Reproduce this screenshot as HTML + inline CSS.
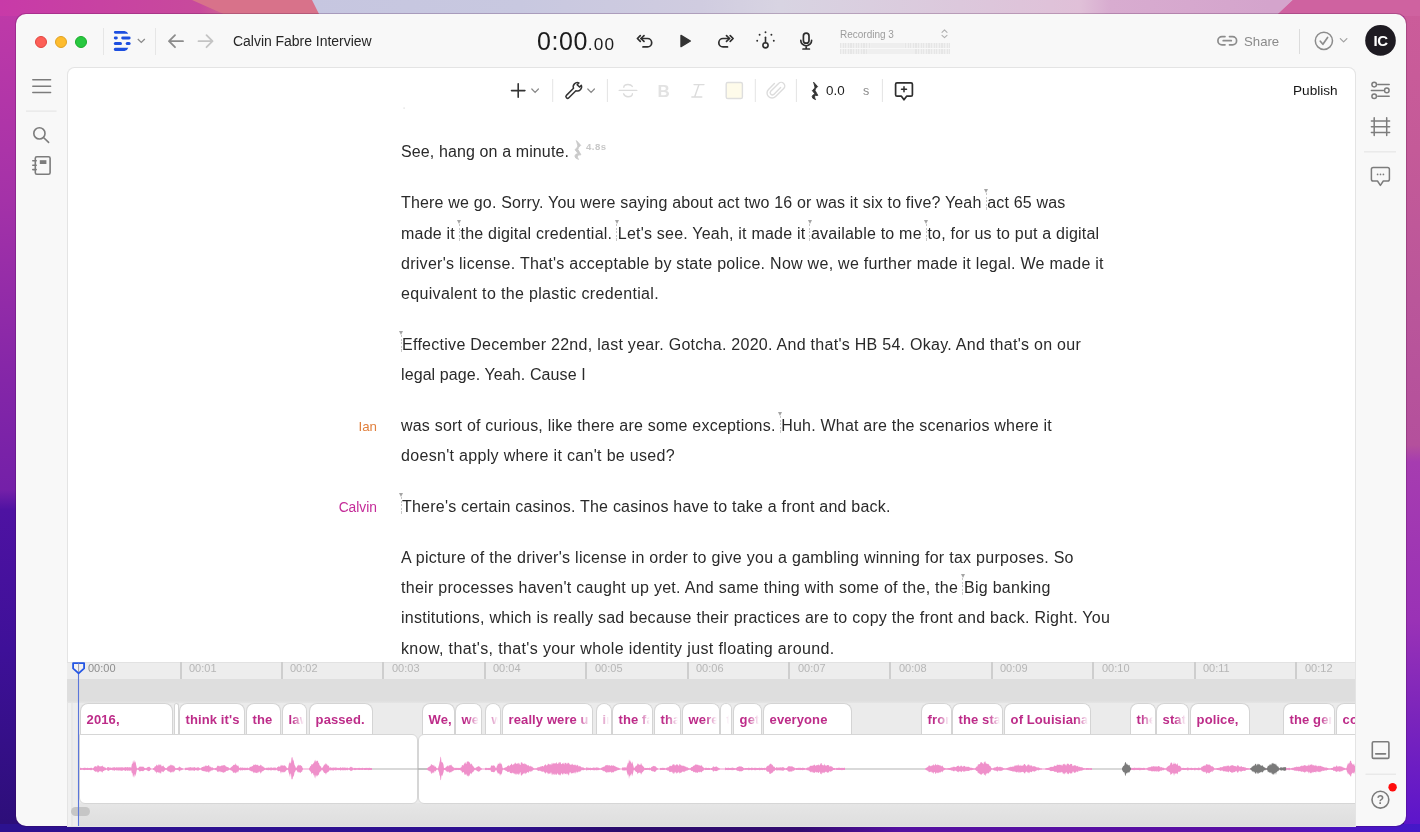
<!DOCTYPE html>
<html><head><meta charset="utf-8"><style>
*{box-sizing:border-box;margin:0;padding:0}
html,body{width:1420px;height:832px;overflow:hidden}
body{position:relative;font-family:"Liberation Sans",sans-serif;background:#3a1290;-webkit-font-smoothing:antialiased}
.tx,.a,.tag{will-change:transform}
.a{position:absolute}
svg{position:absolute;overflow:visible}
#win{position:absolute;left:16px;top:14px;width:1390px;height:812px;border-radius:10px;background:#f8f8f8;box-shadow:0 0 0 1px rgba(60,0,60,.22)}
#panel{position:absolute;left:67.5px;top:67.5px;width:1287px;height:758.5px;background:#fff;border-radius:6.5px 6.5px 0 0;box-shadow:0 0 0 1px #e4e4e4}
.dot{width:12.2px;height:12.2px;border-radius:50%;border:0.5px solid}
.vdiv{width:1px;background:#e6e6e6}
.meter{background:repeating-linear-gradient(90deg,#e6e6e6 0 1.2px,#f0f0f0 1.2px 2.6px)}
.tx{position:absolute;left:401px;font-size:16px;line-height:16px;color:#2a2a2a;white-space:nowrap}
.mk{display:inline-block;width:1px;height:16px;vertical-align:top;position:relative}
.mk::before{content:"";position:absolute;left:-2.2px;top:-6.4px;width:0;height:0;border-left:2.2px solid transparent;border-right:2.2px solid transparent;border-top:4.6px solid #a4a4a4}
.mk::after{content:"";position:absolute;left:-0.5px;top:-1.6px;width:1px;height:17.3px;background:repeating-linear-gradient(#c6c6c6 0 2.2px,rgba(255,255,255,0) 2.2px 3.6px)}
#tl{position:absolute;left:0;top:0;width:1420px;height:832px;overflow:hidden;clip-path:inset(0 65.5px 6.5px 67px)}
.tag{position:absolute;top:703px;height:31.5px;background:#fff;border:1px solid #d4d4d4;border-bottom:none;border-radius:8px 8px 0 0;overflow:hidden;white-space:nowrap}
.tag span{position:absolute;left:5.6px;top:8.4px;font-size:13px;font-weight:bold;color:#bd2c89;letter-spacing:0.1px}
.fade::after{content:"";position:absolute;right:0;top:0;width:14px;height:100%;background:linear-gradient(90deg,rgba(255,255,255,0),#fff 85%)}
.clip{top:734px;height:70px;background:#fff;border:1px solid #d6d6d6}
</style></head><body>

<div class="a" style="left:0;top:0;width:1420px;height:832px;background:linear-gradient(180deg,#c03aa8 0px,#a432a8 200px,#8426a8 380px,#7420a8 490px,#4e12a2 510px,#3e1098 650px,#2c0e78 832px)"></div>
<div class="a" style="left:0;top:0;width:1420px;height:16px;background:linear-gradient(90deg,#c83aa8 0px,#c84a9c 200px,#d06890 230px)"></div>
<div class="a" style="left:0;top:0;width:1420px;height:16px;background:#d8728a;clip-path:polygon(192px 0,320px 0,326px 16px,228px 16px)"></div>
<div class="a" style="left:0;top:0;width:1420px;height:16px;background:linear-gradient(90deg,#c6c6e0 300px,#c8c8e0 520px,#d0cce0 700px,#d8d4e2 780px,#dcc8dc 960px,#e0c0d8 1080px,#d8acd0 1110px,#d4a4cc 1270px);clip-path:polygon(312px 0,1293px 0,1276px 16px,320px 16px)"></div>
<div class="a" style="left:1404px;top:0;width:16px;height:832px;background:linear-gradient(180deg,#cc5c9a 0px,#c45a98 150px,#ba569a 300px,#b4509c 445px,#a63cb0 462px,#9a32b6 620px,#7a24bc 720px,#5a14cc 832px)"></div>
<div class="a" style="left:0;top:0;width:1420px;height:16px;background:#cf62a0;clip-path:polygon(1293px 0,1420px 0,1420px 16px,1276px 16px)"></div>
<div class="a" style="left:0;top:824px;width:1420px;height:8px;background:linear-gradient(90deg,#2c1290 0px,#2e1090 500px,#2a0c6c 620px,#320c70 800px,#5410a0 900px,#5a10a4 1250px,#4c14c0 1340px,#4418c8 1420px)"></div>

<div id="win"></div>

<div class="a dot" style="left:34.5px;top:35.5px;background:#fd5f57;border-color:#e0443e"></div>
<div class="a dot" style="left:54.9px;top:35.5px;background:#febc2e;border-color:#dea123"></div>
<div class="a dot" style="left:75px;top:35.5px;background:#28c840;border-color:#1aab29"></div>
<div class="a vdiv" style="left:103px;top:28px;height:27px"></div>
<div class="a vdiv" style="left:155px;top:28px;height:27px"></div>
<svg style="left:0;top:0" width="1420" height="100">
 <g fill="#1d4fe0">
  <path d="M115.3 30.9 H124.5 Q127.5 31.2 128.2 33.8 H115.3 A1.45 1.45 0 0 1 115.3 30.9Z"/>
  <rect x="113.8" y="36.5" width="4" height="2.9" rx="1.45"/>
  <rect x="121.2" y="36.5" width="9.4" height="2.9" rx="1.45"/>
  <rect x="113.8" y="42" width="8.2" height="3" rx="1.5"/>
  <rect x="125.7" y="42" width="4.9" height="3" rx="1.5"/>
  <path d="M115.3 47.8 H128.3 Q127.5 50.6 124.5 50.9 H115.3 A1.45 1.45 0 0 1 115.3 47.8Z"/>
 </g>
 <path d="M137.8 39 L141.3 42.4 L144.8 39" fill="none" stroke="#8a8a8a" stroke-width="1.3"/>
 <g fill="none" stroke="#8c8c8c" stroke-width="1.8" stroke-linecap="round" stroke-linejoin="round">
  <path d="M183 41.2 H169 M175 35.2 L169 41.2 L175 47.2"/>
 </g>
 <g fill="none" stroke="#c4c4c4" stroke-width="1.8" stroke-linecap="round" stroke-linejoin="round">
  <path d="M198.5 41.2 H212.5 M206.5 35.2 L212.5 41.2 L206.5 47.2"/>
 </g>
 <!-- rewind -->
 <g fill="none" stroke="#2e2e2e" stroke-width="1.7" stroke-linecap="round" stroke-linejoin="round">
  <path d="M641 38.5 H647.5 A4.2 4.2 0 0 1 647.5 46.9 H643"/>
  <path d="M644 35.6 L641 38.5 L644 41.4"/>
  <path d="M640.3 35.6 L637.4 38.5 L640.3 41.4"/>
 </g>
 <path d="M681 35.4 L690.4 41 L681 46.6Z" fill="#333" stroke="#333" stroke-width="1.4" stroke-linejoin="round"/>
 <g fill="none" stroke="#2e2e2e" stroke-width="1.7" stroke-linecap="round" stroke-linejoin="round">
  <path d="M729.5 38.5 H723 A4.2 4.2 0 0 0 723 46.9 H727.5"/>
  <path d="M726.5 35.6 L729.5 38.5 L726.5 41.4"/>
  <path d="M730.2 35.6 L733.1 38.5 L730.2 41.4"/>
 </g>
 <!-- spark icon -->
 <g fill="#2e2e2e">
  <circle cx="765.5" cy="32.2" r="0.95"/>
  <circle cx="759.6" cy="34.8" r="0.95"/>
  <circle cx="771.4" cy="34.8" r="0.95"/>
  <circle cx="757.2" cy="40.8" r="0.95"/>
  <circle cx="773.8" cy="40.8" r="0.95"/>
 </g>
 <g fill="none" stroke="#2e2e2e" stroke-width="1.6" stroke-linecap="round">
  <path d="M765.5 37.2 V42.6"/>
  <circle cx="765.5" cy="45.3" r="2.6"/>
 </g>
 <!-- mic -->
 <g fill="none" stroke="#2e2e2e" stroke-width="1.7" stroke-linecap="round" stroke-linejoin="round">
  <rect x="803.4" y="33.2" width="5.6" height="10" rx="2.8"/>
  <path d="M800.8 40.4 A5.4 5.4 0 0 0 811.6 40.4 M806.2 45.8 V49 M803 49 H809.4"/>
 </g>
 <!-- updown chevron -->
 <g fill="none" stroke="#b0b0b0" stroke-width="1.1" stroke-linecap="round" stroke-linejoin="round">
  <path d="M942 32.3 L944.5 29.9 L947 32.3 M942 35.3 L944.5 37.7 L947 35.3"/>
 </g>
 <!-- link icon -->
 <g fill="none" stroke="#8c8c8c" stroke-width="1.7" stroke-linecap="round">
  <path d="M1225 36.6 H1222 A4.1 4.1 0 0 0 1222 44.8 H1225"/>
  <path d="M1229.5 36.6 H1232.5 A4.1 4.1 0 0 1 1232.5 44.8 H1229.5"/>
  <path d="M1223.2 40.7 H1231.3"/>
 </g>
 <!-- check circle -->
 <g fill="none" stroke="#8c8c8c" stroke-width="1.5" stroke-linecap="round" stroke-linejoin="round">
  <circle cx="1323.9" cy="40.8" r="8.6"/>
  <path d="M1320.3 41.2 L1322.9 44.3 L1327.6 37.5" stroke-width="1.7"/>
  <path d="M1340.3 38.6 L1343.6 41.9 L1346.9 38.6" stroke-width="1.2" stroke="#a0a0a0"/>
 </g>
 <circle cx="1380.5" cy="40.4" r="15.3" fill="#1e1b22"/>
</svg>
<div class="a" style="left:232.5px;top:33px;font-size:14px;color:#262626;white-space:nowrap;letter-spacing:-0.03px">Calvin Fabre Interview</div>
<div class="a" style="left:537px;top:27px;font-size:25px;color:#1c1c1c;white-space:nowrap;letter-spacing:0.55px">0:00<span style="font-size:17.2px;letter-spacing:1.2px">.00</span></div>
<div class="a" style="left:839.5px;top:28.5px;font-size:10px;color:#9c9c9c;white-space:nowrap">Recording 3</div>
<div class="a meter" style="left:839.5px;top:42.5px;width:110px;height:5px"></div>
<div class="a meter" style="left:839.5px;top:48.5px;width:110px;height:5px"></div>
<div class="a" style="left:871px;top:42.5px;width:33px;height:5px;background:#eeeeee"></div>
<div class="a" style="left:869px;top:48.5px;width:46px;height:5px;background:#efefef"></div>
<div class="a" style="left:1244px;top:33.5px;font-size:13.2px;color:#8a8a8a;white-space:nowrap">Share</div>
<div class="a vdiv" style="left:1298.5px;top:28.5px;height:25px;background:#dcdcdc"></div>
<div class="a" style="left:1365px;top:32px;width:31px;text-align:center;font-size:15px;font-weight:bold;color:#fff;letter-spacing:-0.6px">IC</div>


<svg style="left:0;top:0" width="1420" height="832">
 <g fill="none" stroke="#7c7c7c" stroke-width="1.5" stroke-linecap="round">
  <path d="M32.8 79.8 H50.6 M32.8 86.2 H50.6 M32.8 92.5 H50.6"/>
 </g>
 <path d="M26 111.1 H56.5" stroke="#e2e2e2" stroke-width="1"/>
 <g fill="none" stroke="#7c7c7c" stroke-width="1.6" stroke-linecap="round" stroke-linejoin="round">
  <circle cx="39.4" cy="133.4" r="5.6"/>
  <path d="M43.5 137.5 L48.6 142.4"/>
  <rect x="35.3" y="156.7" width="14.8" height="17.6" rx="1.6"/>
  <path d="M32.8 160.8 H36.2 M32.8 165.2 H36.2 M32.8 169.6 H36.2"/>
 </g>
 <rect x="39.8" y="160.2" width="6.6" height="3.8" fill="#7c7c7c"/>
 <!-- right sidebar -->
 <g fill="none" stroke="#7c7c7c" stroke-width="1.5" stroke-linecap="round" stroke-linejoin="round">
  <circle cx="1374.2" cy="84.6" r="2.3"/>
  <path d="M1377.8 84.6 H1389.2"/>
  <path d="M1371.4 90.4 H1383.3"/>
  <circle cx="1386.8" cy="90.4" r="2.3"/>
  <circle cx="1374.2" cy="96.2" r="2.3"/>
  <path d="M1377.8 96.2 H1389.2"/>
  <path d="M1374.2 117.8 V135.6 M1386.7 117.8 V135.6 M1371.4 121 H1389.6 M1371.4 126.7 H1389.6 M1371.4 132.4 H1389.6"/>
  <path d="M1373.6 167.4 H1387.6 Q1389.4 167.4 1389.4 169.2 V179.2 Q1389.4 181 1387.6 181 H1383.3 L1380.4 185.4 L1377.5 181 H1373.2 Q1371.4 181 1371.4 179.2 V169.2 Q1371.4 167.4 1373.2 167.4 Z"/>
 </g>
 <g fill="#7c7c7c"><circle cx="1377.6" cy="174.4" r="0.85"/><circle cx="1380.5" cy="174.4" r="0.85"/><circle cx="1383.4" cy="174.4" r="0.85"/></g>
 <path d="M1364 151.9 H1396" stroke="#e2e2e2" stroke-width="1"/>
 <g fill="none" stroke="#7c7c7c" stroke-width="1.6" stroke-linecap="round" stroke-linejoin="round">
  <rect x="1372.3" y="741.8" width="16.6" height="16.6" rx="1.2"/>
  <path d="M1375.8 753.8 H1385.4" stroke-width="1.8"/>
  <circle cx="1380.4" cy="799.7" r="8.4"/>
 </g>
 <path d="M1365.5 774.2 H1396" stroke="#e2e2e2" stroke-width="1"/>
 <text x="1380.4" y="804" font-family="Liberation Sans" font-weight="bold" font-size="12" fill="#7c7c7c" text-anchor="middle">?</text>
 <circle cx="1392.6" cy="787.3" r="4.2" fill="#ff0c0c"/>
</svg>

<div id="panel"></div>

<svg style="left:0;top:0" width="1420" height="120">
 <g fill="none" stroke="#333" stroke-width="1.6" stroke-linecap="round">
  <path d="M518.2 83.8 V97.3 M511.5 90.6 H524.9"/>
 </g>
 <path d="M531.8 89 L535.1 92.3 L538.4 89" fill="none" stroke="#888" stroke-width="1.2" stroke-linecap="round"/>
 <path d="M587.8 89 L591.1 92.3 L594.4 89" fill="none" stroke="#888" stroke-width="1.2" stroke-linecap="round"/>
 <path d="M552.7 79 V102 M607.4 79 V102 M755.3 79 V102 M796.4 79 V102 M882.4 79 V102" stroke="#e4e4e4" stroke-width="1"/>
 <!-- wrench -->
 <path transform="translate(577.4 86.8) rotate(-45)" d="M-13.8 -1.7 L-3.83 -1.7 A4.2 4.2 0 0 1 3.83 -1.7 L1.3 -1.7 L1.3 1.7 L3.83 1.7 A4.2 4.2 0 0 1 -3.83 1.7 L-13.8 1.7 A1.7 1.7 0 0 1 -13.8 -1.7 Z" fill="none" stroke="#333" stroke-width="1.5" stroke-linejoin="round"/>
 <!-- strike -->
 <g fill="none" stroke="#dcdcdc" stroke-width="1.4" stroke-linecap="round">
  <path d="M619.2 90.4 H636.8"/>
  <path d="M632.3 86.4 Q631 84.5 628 84.5 Q623.8 84.5 623.8 87.3"/>
  <path d="M623.6 93.8 Q624.6 96.7 628 96.7 Q632.4 96.7 632.4 93.8"/>
 </g>
 <text x="657.6" y="97.2" font-family="Liberation Sans" font-weight="bold" font-size="17" fill="#e2e2e2">B</text>
 <g fill="none" stroke="#dcdcdc" stroke-width="1.4" stroke-linecap="round">
  <path d="M694 84.6 H704 M691.8 97 H701.8 M699 84.6 L694.6 97"/>
 </g>
 <rect x="726.2" y="82.5" width="16.2" height="16" rx="1.6" fill="#fefbea" stroke="#dedede" stroke-width="1.4"/>
 <!-- clip -->
 <path d="M780.6 87.6 L773.8 94.4 A2.2 2.2 0 0 1 770.7 91.3 L778.6 83.4 A3.6 3.6 0 0 1 783.7 88.5 L775.6 96.6 A5 5 0 0 1 768.5 89.5 L774.4 83.6" fill="none" stroke="#dcdcdc" stroke-width="1.4" stroke-linecap="round"/>
 <!-- rest squiggle -->
 <path d="M813.6 82.2 L817.6 86.6 Q815.2 88.6 814.9 90.2 L817.8 95.4 Q815.2 95 814.6 96.6 Q814.4 98.2 815.6 99.6 Q812 98.6 812.2 96.4 Q812.6 94.4 815.2 94.2 L812.3 90.6 Q814.8 88.6 815 87.2 Z" fill="#333" stroke="#333" stroke-width="0.9" stroke-linejoin="round"/>
 <!-- add comment -->
 <g fill="none" stroke="#2e2e2e" stroke-width="1.7" stroke-linecap="round" stroke-linejoin="round">
  <path d="M897 82.8 H911 Q912.4 82.8 912.4 84.2 V94.8 Q912.4 96.2 911 96.2 H906.6 L904 99.8 L901.4 96.2 H897 Q895.6 96.2 895.6 94.8 V84.2 Q895.6 82.8 897 82.8 Z"/>
  <path d="M904 86.8 V91.8 M901.5 89.3 H906.5" stroke-width="1.5"/>
 </g>
</svg>
<div class="a" style="left:825.5px;top:83px;font-size:13.4px;color:#1e1e1e;white-space:nowrap">0.0</div>
<div class="a" style="left:863px;top:84px;font-size:12.5px;color:#8a8a8a;white-space:nowrap">s</div>
<div class="a" style="left:1292.5px;top:83px;font-size:13.6px;color:#141414;white-space:nowrap">Publish</div>

<div class="tx" style="top:144.46px;letter-spacing:0.117px">See, hang on a minute.</div>
<div class="tx" style="top:195.46px;letter-spacing:0.178px">There we go. Sorry. You were saying about act two 16 or was it six to five? Yeah <span class="mk"></span>act 65 was</div>
<div class="tx" style="top:226.46px;letter-spacing:0.209px">made it <span class="mk"></span>the digital credential. <span class="mk"></span>Let's see. Yeah, it made it <span class="mk"></span>available to me <span class="mk"></span>to, for us to put a digital</div>
<div class="tx" style="top:256.46px;letter-spacing:0.276px">driver's license. That's acceptable by state police. Now we, we further made it legal. We made it</div>
<div class="tx" style="top:286.46px;letter-spacing:0.339px">equivalent to the plastic credential.</div>
<div class="tx" style="top:337.46px;letter-spacing:0.276px"><span class="mk"></span>Effective December 22nd, last year. Gotcha. 2020. And that's HB 54. Okay. And that's on our</div>
<div class="tx" style="top:367.46px;letter-spacing:0.093px">legal page. Yeah. Cause I</div>
<div class="tx" style="top:418.46px;letter-spacing:0.209px">was sort of curious, like there are some exceptions. <span class="mk"></span>Huh. What are the scenarios where it</div>
<div class="tx" style="top:448.46px;letter-spacing:0.317px">doesn't apply where it can't be used?</div>
<div class="tx" style="top:499.46px;letter-spacing:0.216px"><span class="mk"></span>There's certain casinos. The casinos have to take a front and back.</div>
<div class="tx" style="top:550.46px;letter-spacing:0.284px">A picture of the driver's license in order to give you a gambling winning for tax purposes. So</div>
<div class="tx" style="top:580.46px;letter-spacing:0.285px">their processes haven't caught up yet. And same thing with some of the, the <span class="mk"></span>Big banking</div>
<div class="tx" style="top:610.46px;letter-spacing:0.279px">institutions, which is really sad because their practices are to copy the front and back. Right. You</div>
<div class="tx" style="top:641.46px;letter-spacing:0.369px">know, that's, that's your whole identity just floating around.</div>

<svg style="left:0;top:0" width="700" height="200">
 <path transform="translate(576.4 140.6) scale(1.08) translate(-813.6 -82.2)" d="M813.6 82.2 L817.6 86.6 Q815.2 88.6 814.9 90.2 L817.8 95.4 Q815.2 95 814.6 96.6 Q814.4 98.2 815.6 99.6 Q812 98.6 812.2 96.4 Q812.6 94.4 815.2 94.2 L812.3 90.6 Q814.8 88.6 815 87.2 Z" fill="#cacaca" stroke="#cacaca" stroke-width="0.8" stroke-linejoin="round"/>
 <rect x="403.5" y="107.5" width="1.2" height="1.2" fill="#d8d8d8"/>
</svg>
<div class="a" style="left:585.5px;top:140.5px;font-size:9.6px;font-weight:bold;color:#c8c8c8;white-space:nowrap;letter-spacing:0.5px">4.8s</div>
<div class="a" style="left:357px;top:418.8px;font-size:13.3px;color:#e07f3c;white-space:nowrap;width:20px;text-align:right">Ian</div>

<div class="a" style="left:300px;top:499.6px;font-size:13.8px;color:#c42a98;white-space:nowrap;width:77px;text-align:right">Calvin</div>
<div id="tl"><div class="a" style="left:67px;top:661.5px;width:1288px;height:17.5px;background:#ededed;border-top:1px solid #e2e2e2"></div>
<div class="a" style="left:67px;top:679px;width:1288px;height:24px;background:#dedede"></div>
<div class="a" style="left:67px;top:701px;width:1288px;height:3px;background:linear-gradient(#dfdfdf,#e8e8e8)"></div>
<div class="a" style="left:67px;top:703px;width:1288px;height:101px;background:#ebebeb"></div>
<div class="a" style="left:67px;top:803px;width:1288px;height:23px;background:linear-gradient(#e6e6e6,#dedede)"></div>
<div class="a" style="left:67px;top:703px;width:11.5px;height:123px;background:linear-gradient(90deg,#e4e4e4 0 1px,#f0f0f0 1px 4px,#e8e8e8 4px 6px,#ededed 6px)"></div>
<div class="a" style="left:87.6px;top:662.2px;font-size:11px;color:#8e8e8e;white-space:nowrap">00:00</div>
<div class="a" style="left:179.50px;top:662px;width:1.6px;height:17px;background:#cecece"></div>
<div class="a" style="left:189.0px;top:662.2px;font-size:11px;color:#b6b6b6;white-space:nowrap">00:01</div>
<div class="a" style="left:280.91px;top:662px;width:1.6px;height:17px;background:#cecece"></div>
<div class="a" style="left:290.4px;top:662.2px;font-size:11px;color:#b6b6b6;white-space:nowrap">00:02</div>
<div class="a" style="left:382.32px;top:662px;width:1.6px;height:17px;background:#cecece"></div>
<div class="a" style="left:391.8px;top:662.2px;font-size:11px;color:#b6b6b6;white-space:nowrap">00:03</div>
<div class="a" style="left:483.73px;top:662px;width:1.6px;height:17px;background:#cecece"></div>
<div class="a" style="left:493.2px;top:662.2px;font-size:11px;color:#b6b6b6;white-space:nowrap">00:04</div>
<div class="a" style="left:585.14px;top:662px;width:1.6px;height:17px;background:#cecece"></div>
<div class="a" style="left:594.6px;top:662.2px;font-size:11px;color:#b6b6b6;white-space:nowrap">00:05</div>
<div class="a" style="left:686.55px;top:662px;width:1.6px;height:17px;background:#cecece"></div>
<div class="a" style="left:696.1px;top:662.2px;font-size:11px;color:#b6b6b6;white-space:nowrap">00:06</div>
<div class="a" style="left:787.96px;top:662px;width:1.6px;height:17px;background:#cecece"></div>
<div class="a" style="left:797.5px;top:662.2px;font-size:11px;color:#b6b6b6;white-space:nowrap">00:07</div>
<div class="a" style="left:889.37px;top:662px;width:1.6px;height:17px;background:#cecece"></div>
<div class="a" style="left:898.9px;top:662.2px;font-size:11px;color:#b6b6b6;white-space:nowrap">00:08</div>
<div class="a" style="left:990.78px;top:662px;width:1.6px;height:17px;background:#cecece"></div>
<div class="a" style="left:1000.3px;top:662.2px;font-size:11px;color:#b6b6b6;white-space:nowrap">00:09</div>
<div class="a" style="left:1092.19px;top:662px;width:1.6px;height:17px;background:#cecece"></div>
<div class="a" style="left:1101.7px;top:662.2px;font-size:11px;color:#b6b6b6;white-space:nowrap">00:10</div>
<div class="a" style="left:1193.60px;top:662px;width:1.6px;height:17px;background:#cecece"></div>
<div class="a" style="left:1203.1px;top:662.2px;font-size:11px;color:#b6b6b6;white-space:nowrap">00:11</div>
<div class="a" style="left:1295.01px;top:662px;width:1.6px;height:17px;background:#cecece"></div>
<div class="a" style="left:1304.5px;top:662.2px;font-size:11px;color:#b6b6b6;white-space:nowrap">00:12</div>
<div class="tag" style="left:79.6px;width:93.4px"><span>2016,</span></div>
<div class="tag" style="left:173.7px;width:4.6px"><span></span></div>
<div class="tag" style="left:179.2px;width:66.0px"><span>think it's</span></div>
<div class="tag" style="left:246.0px;width:35.0px"><span>the</span></div>
<div class="tag fade" style="left:281.8px;width:24.7px"><span>law</span></div>
<div class="tag" style="left:309.3px;width:64.1px"><span>passed.</span></div>
<div class="tag" style="left:421.8px;width:32.6px"><span>We,</span></div>
<div class="tag fade" style="left:455.1px;width:27.4px"><span>we</span></div>
<div class="tag fade" style="left:485.4px;width:15.6px"><span>w</span></div>
<div class="tag fade" style="left:501.7px;width:91.0px"><span>really were u</span></div>
<div class="tag fade" style="left:595.6px;width:15.6px"><span>in</span></div>
<div class="tag fade" style="left:611.7px;width:41.3px"><span>the fa</span></div>
<div class="tag fade" style="left:654.0px;width:26.7px"><span>tha</span></div>
<div class="tag fade" style="left:681.7px;width:37.5px"><span>were</span></div>
<div class="tag fade" style="left:720.2px;width:11.8px"><span>to</span></div>
<div class="tag fade" style="left:733.0px;width:28.6px"><span>get</span></div>
<div class="tag" style="left:762.6px;width:88.7px"><span>everyone</span></div>
<div class="tag fade" style="left:920.6px;width:30.8px"><span>from</span></div>
<div class="tag fade" style="left:952.0px;width:51.0px"><span>the sta</span></div>
<div class="tag fade" style="left:1004.0px;width:86.5px"><span>of Louisiana</span></div>
<div class="tag fade" style="left:1129.5px;width:26.1px"><span>the</span></div>
<div class="tag fade" style="left:1156.2px;width:33.0px"><span>stat</span></div>
<div class="tag" style="left:1189.8px;width:60.4px"><span>police,</span></div>
<div class="tag fade" style="left:1283.4px;width:51.9px"><span>the ger</span></div>
<div class="tag fade" style="left:1335.7px;width:44.3px"><span>co</span></div>
<div class="a clip" style="left:78.5px;width:339px;border-radius:0 6px 6px 6px"></div>
<div class="a clip" style="left:418.2px;width:980px;border-radius:6px 0 0 6px"></div>
<svg style="left:0;top:0" width="1420" height="832">
<path d="M372 769 H427 M845 769 H925 M1092 769 H1130 M1280 769 H1290" stroke="#b4b4b4" stroke-width="1.2"/>
<path d="M418 769 H427" stroke="#b4b4b4" stroke-width="1.2"/>
<path d="M80 769 H372 M427 769 H845 M925 769 H1092 M1130 769 H1280 M1290 769 H1356" stroke="#ef98cc" stroke-width="1.2"/>
<path d="M80.0 768.0 L80.5 767.7 L81.0 767.8 L81.5 768.2 L82.0 768.3 L82.5 768.2 L83.0 767.9 L83.5 768.1 L84.0 767.8 L84.5 767.8 L85.0 767.7 L85.5 767.8 L86.0 768.2 L86.5 768.0 L87.0 768.0 L87.5 767.7 L88.0 767.8 L88.5 768.2 L89.0 767.9 L89.5 768.1 L90.0 767.9 L90.5 767.7 L91.0 768.0 L91.5 767.8 L92.0 767.8 L92.0 768.4 L92.5 768.4 L93.0 768.3 L93.5 768.1 L94.0 767.1 L94.5 766.6 L95.0 766.4 L95.5 766.3 L96.0 765.9 L96.5 766.5 L97.0 766.9 L97.5 765.6 L98.0 764.9 L98.5 765.6 L99.0 766.3 L99.5 766.2 L100.0 766.6 L100.5 766.5 L101.0 765.9 L101.5 766.4 L102.0 765.7 L102.5 765.5 L103.0 766.7 L103.5 767.0 L104.0 766.5 L104.5 767.4 L105.0 767.5 L105.5 767.5 L106.0 768.2 L106.5 768.4 L107.0 768.4 L107.0 767.3 L107.5 767.3 L108.0 767.3 L108.5 767.1 L109.0 767.4 L109.5 767.6 L110.0 767.7 L110.5 767.6 L111.0 767.6 L111.5 768.0 L112.0 767.8 L112.5 767.8 L113.0 767.1 L113.5 767.5 L114.0 767.4 L114.5 767.1 L115.0 767.6 L115.5 767.8 L116.0 767.5 L116.5 766.9 L117.0 767.7 L117.5 767.3 L118.0 767.4 L118.5 767.6 L119.0 767.1 L119.5 767.5 L120.0 767.6 L120.5 767.2 L121.0 767.5 L121.5 767.2 L122.0 767.3 L122.5 767.2 L123.0 767.6 L123.5 767.4 L124.0 767.7 L124.5 767.5 L125.0 767.1 L125.5 767.2 L126.0 767.0 L126.5 767.6 L127.0 767.5 L127.5 767.1 L128.0 767.0 L128.5 767.3 L129.0 767.9 L129.5 767.1 L130.0 767.1 L130.5 767.6 L131.0 767.4 L131.0 768.4 L131.5 766.3 L132.0 763.6 L132.5 764.0 L133.0 760.5 L133.5 763.3 L134.0 759.5 L134.5 761.8 L135.0 763.1 L135.5 761.0 L136.0 764.2 L136.5 766.4 L137.0 768.4 L137.0 768.4 L137.5 768.4 L138.0 768.1 L138.5 767.8 L139.0 767.2 L139.5 766.6 L140.0 766.7 L140.5 766.6 L141.0 766.7 L141.5 766.5 L142.0 767.0 L142.5 766.8 L143.0 766.2 L143.5 767.0 L144.0 767.2 L144.5 768.0 L145.0 768.1 L145.5 768.2 L146.0 768.4 L146.0 768.4 L146.5 768.1 L147.0 767.5 L147.5 767.2 L148.0 767.1 L148.5 766.9 L149.0 766.5 L149.5 767.1 L150.0 767.3 L150.5 768.3 L151.0 768.4 L151.0 769.5 L150.5 769.6 L150.0 770.4 L149.5 770.9 L149.0 771.0 L148.5 771.2 L148.0 771.0 L147.5 770.6 L147.0 770.4 L146.5 769.9 L146.0 769.5 L146.0 769.6 L145.5 769.7 L145.0 769.8 L144.5 769.9 L144.0 770.8 L143.5 770.8 L143.0 771.6 L142.5 771.0 L142.0 771.0 L141.5 771.0 L141.0 770.8 L140.5 771.2 L140.0 771.4 L139.5 771.4 L139.0 770.6 L138.5 770.3 L138.0 769.8 L137.5 769.6 L137.0 769.5 L137.0 769.5 L136.5 771.6 L136.0 774.0 L135.5 776.6 L135.0 773.5 L134.5 775.6 L134.0 778.0 L133.5 774.7 L133.0 777.4 L132.5 772.9 L132.0 773.4 L131.5 771.8 L131.0 769.5 L131.0 770.6 L130.5 770.4 L130.0 770.7 L129.5 770.9 L129.0 770.1 L128.5 770.7 L128.0 770.8 L127.5 770.9 L127.0 770.2 L126.5 770.2 L126.0 770.7 L125.5 770.9 L125.0 770.7 L124.5 770.4 L124.0 770.1 L123.5 770.2 L123.0 770.3 L122.5 770.8 L122.0 770.7 L121.5 770.9 L121.0 770.2 L120.5 770.7 L120.0 770.4 L119.5 770.3 L119.0 770.8 L118.5 770.5 L118.0 770.2 L117.5 770.4 L117.0 770.3 L116.5 770.6 L116.0 770.3 L115.5 769.9 L115.0 770.3 L114.5 770.9 L114.0 770.2 L113.5 770.3 L113.0 770.5 L112.5 770.3 L112.0 770.1 L111.5 769.8 L111.0 770.1 L110.5 770.1 L110.0 770.0 L109.5 770.3 L109.0 770.4 L108.5 770.9 L108.0 770.7 L107.5 770.3 L107.0 770.6 L107.0 769.6 L106.5 769.6 L106.0 769.7 L105.5 770.2 L105.0 770.3 L104.5 770.3 L104.0 771.0 L103.5 771.1 L103.0 771.0 L102.5 772.5 L102.0 772.4 L101.5 771.3 L101.0 772.1 L100.5 771.0 L100.0 771.3 L99.5 771.2 L99.0 771.4 L98.5 772.2 L98.0 772.4 L97.5 772.6 L97.0 771.0 L96.5 771.4 L96.0 772.2 L95.5 771.4 L95.0 771.4 L94.5 771.1 L94.0 770.7 L93.5 769.9 L93.0 769.7 L92.5 769.6 L92.0 769.5 L92.0 770.0 L91.5 770.2 L91.0 769.9 L90.5 770.3 L90.0 769.9 L89.5 769.8 L89.0 769.9 L88.5 769.7 L88.0 769.9 L87.5 770.1 L87.0 769.9 L86.5 770.0 L86.0 769.6 L85.5 770.0 L85.0 770.0 L84.5 770.0 L84.0 770.3 L83.5 769.8 L83.0 770.1 L82.5 769.6 L82.0 769.6 L81.5 769.7 L81.0 770.0 L80.5 770.0 L80.0 769.8Z M153.0 768.4 L153.5 768.0 L154.0 767.9 L154.5 767.1 L155.0 766.3 L155.5 766.6 L156.0 765.8 L156.5 764.3 L157.0 765.8 L157.5 765.0 L158.0 765.9 L158.5 764.4 L159.0 764.3 L159.5 765.4 L160.0 763.8 L160.5 765.5 L161.0 764.2 L161.5 766.2 L162.0 766.4 L162.5 765.9 L163.0 765.8 L163.5 765.5 L164.0 767.0 L164.5 767.0 L165.0 768.0 L165.5 768.1 L166.0 768.4 L166.0 768.4 L166.5 768.2 L167.0 767.7 L167.5 766.9 L168.0 766.5 L168.5 766.4 L169.0 765.4 L169.5 765.8 L170.0 765.7 L170.5 765.0 L171.0 764.2 L171.5 765.2 L172.0 765.5 L172.5 765.6 L173.0 764.8 L173.5 766.2 L174.0 765.5 L174.5 766.4 L175.0 767.5 L175.5 768.1 L176.0 768.4 L176.0 768.4 L176.5 768.2 L177.0 768.0 L177.5 768.0 L178.0 767.8 L178.5 767.4 L179.0 767.3 L179.5 766.2 L180.0 767.0 L180.5 767.2 L181.0 767.7 L181.5 767.9 L182.0 767.7 L182.5 768.4 L183.0 768.4 L183.0 769.5 L182.5 769.6 L182.0 770.2 L181.5 770.1 L181.0 770.2 L180.5 770.6 L180.0 770.6 L179.5 771.7 L179.0 770.7 L178.5 770.3 L178.0 770.1 L177.5 769.8 L177.0 769.9 L176.5 769.7 L176.0 769.6 L176.0 769.6 L175.5 769.8 L175.0 770.5 L174.5 771.2 L174.0 771.7 L173.5 771.5 L173.0 772.9 L172.5 771.5 L172.0 771.7 L171.5 772.0 L171.0 773.1 L170.5 772.4 L170.0 771.7 L169.5 771.6 L169.0 772.0 L168.5 771.0 L168.0 771.6 L167.5 770.8 L167.0 770.3 L166.5 769.8 L166.0 769.6 L166.0 769.6 L165.5 769.8 L165.0 769.8 L164.5 770.9 L164.0 771.1 L163.5 771.9 L163.0 772.3 L162.5 771.4 L162.0 771.6 L161.5 771.3 L161.0 774.0 L160.5 772.6 L160.0 773.7 L159.5 772.0 L159.0 773.2 L158.5 772.5 L158.0 771.7 L157.5 772.4 L157.0 771.8 L156.5 773.7 L156.0 771.8 L155.5 771.5 L155.0 771.8 L154.5 770.5 L154.0 770.1 L153.5 770.0 L153.0 769.6Z M185.0 768.0 L185.5 767.7 L186.0 767.8 L186.5 767.8 L187.0 767.7 L187.5 767.8 L188.0 767.6 L188.5 767.5 L189.0 767.5 L189.5 767.3 L190.0 767.5 L190.5 766.9 L191.0 767.2 L191.5 767.8 L192.0 767.3 L192.5 767.5 L193.0 767.8 L193.5 767.4 L194.0 767.1 L194.5 767.3 L195.0 767.3 L195.5 767.8 L196.0 767.9 L196.5 767.8 L197.0 767.4 L197.5 767.3 L198.0 767.4 L198.5 767.2 L199.0 767.6 L200.0 768.4 L200.5 768.4 L201.0 768.2 L201.5 767.4 L202.0 767.0 L202.5 767.0 L203.0 766.9 L203.5 766.6 L204.0 766.4 L204.5 766.7 L205.0 765.5 L205.5 765.6 L206.0 766.5 L206.5 765.5 L207.0 765.8 L207.5 765.9 L208.0 765.9 L208.5 765.1 L209.0 765.1 L209.5 766.9 L210.0 766.0 L210.5 766.9 L211.0 767.3 L211.5 767.4 L212.0 767.6 L212.5 767.2 L213.0 767.8 L213.5 768.3 L214.0 768.4 L214.0 768.4 L214.5 768.4 L215.0 768.0 L215.5 768.0 L216.0 767.7 L216.5 767.7 L217.0 766.4 L217.5 765.8 L218.0 765.6 L218.5 766.3 L219.0 765.4 L219.5 766.5 L220.0 766.2 L220.5 766.3 L221.0 765.7 L221.5 765.7 L222.0 765.3 L222.5 765.8 L223.0 765.3 L223.5 765.5 L224.0 764.8 L224.5 765.2 L225.0 765.4 L225.5 765.7 L226.0 766.8 L226.5 766.4 L227.0 767.0 L227.5 767.3 L228.0 766.8 L228.5 767.5 L229.0 768.0 L229.5 768.4 L230.0 768.4 L230.0 768.4 L230.5 767.7 L231.0 767.2 L231.5 766.9 L232.0 766.3 L232.5 766.2 L233.0 765.6 L233.5 764.7 L234.0 764.9 L234.5 764.6 L235.0 765.3 L235.5 763.1 L236.0 764.8 L236.5 764.7 L237.0 766.0 L237.5 765.8 L238.0 765.2 L238.5 766.0 L239.0 767.6 L239.5 767.8 L240.0 768.4 L240.0 767.8 L240.5 767.4 L241.0 767.2 L241.5 767.9 L242.0 767.6 L242.5 767.5 L243.0 767.8 L243.5 767.8 L244.0 768.0 L244.5 767.8 L245.0 767.5 L245.5 767.9 L246.0 767.7 L246.5 768.1 L247.0 767.7 L247.5 767.7 L248.0 767.5 L248.0 768.4 L248.5 768.3 L249.0 767.7 L249.5 767.7 L250.0 766.6 L250.5 767.0 L251.0 766.7 L251.5 766.8 L252.0 766.0 L252.5 766.2 L253.0 765.7 L253.5 764.8 L254.0 764.5 L254.5 765.2 L255.0 764.6 L255.5 764.3 L256.0 765.3 L256.5 764.9 L257.0 764.4 L257.5 765.2 L258.0 764.5 L258.5 766.1 L259.0 765.7 L259.5 765.8 L260.0 766.0 L260.5 764.4 L261.0 765.1 L261.5 765.3 L262.0 766.9 L262.5 766.1 L263.0 766.3 L263.5 766.9 L264.0 767.4 L264.5 767.7 L265.0 767.7 L265.5 768.3 L266.0 768.4 L266.0 767.5 L266.5 768.1 L267.0 767.8 L267.5 767.9 L268.0 767.3 L268.5 767.7 L269.0 767.5 L269.5 768.1 L270.0 767.6 L270.5 767.6 L271.0 767.8 L271.5 767.3 L272.0 767.8 L272.5 767.8 L273.0 768.1 L273.5 767.6 L274.0 767.4 L274.5 767.8 L275.0 767.3 L275.5 767.7 L276.0 767.7 L276.0 768.4 L276.5 768.2 L277.0 767.5 L277.5 767.1 L278.0 767.0 L278.5 766.0 L279.0 766.7 L279.5 766.6 L280.0 766.8 L280.5 765.9 L281.0 764.4 L281.5 765.5 L282.0 765.9 L282.5 764.8 L283.0 766.2 L283.5 765.6 L284.0 765.3 L284.5 765.5 L285.0 765.5 L285.5 766.3 L286.0 766.6 L286.5 767.6 L287.0 768.1 L287.5 768.2 L288.0 768.4 L288.0 768.4 L288.5 766.0 L289.0 763.3 L289.5 763.2 L290.0 760.9 L290.5 763.6 L291.0 763.0 L291.5 757.9 L292.0 757.1 L292.5 757.4 L293.0 761.2 L293.5 759.3 L294.0 762.4 L294.5 764.8 L295.0 765.7 L295.5 766.8 L296.0 768.4 L296.0 768.4 L296.5 767.6 L297.0 766.9 L297.5 765.3 L298.0 766.1 L298.5 765.1 L299.0 764.5 L299.5 765.7 L300.0 764.9 L300.5 765.2 L301.0 765.5 L301.5 766.0 L302.0 766.2 L302.5 767.8 L303.0 768.4 L303.0 769.5 L302.5 770.0 L302.0 771.9 L301.5 771.6 L301.0 772.2 L300.5 772.9 L300.0 772.4 L299.5 772.2 L299.0 772.5 L298.5 772.6 L298.0 771.3 L297.5 772.4 L297.0 770.7 L296.5 770.2 L296.0 769.5 L296.0 769.5 L295.5 771.1 L295.0 771.7 L294.5 772.6 L294.0 775.2 L293.5 776.6 L293.0 776.7 L292.5 779.2 L292.0 779.3 L291.5 779.3 L291.0 773.8 L290.5 773.5 L290.0 777.3 L289.5 774.8 L289.0 773.4 L288.5 771.9 L288.0 769.5 L288.0 769.6 L287.5 769.7 L287.0 770.0 L286.5 770.1 L286.0 770.9 L285.5 771.3 L285.0 772.0 L284.5 771.7 L284.0 772.7 L283.5 772.2 L283.0 771.5 L282.5 772.7 L282.0 771.8 L281.5 771.7 L281.0 773.8 L280.5 772.3 L280.0 771.0 L279.5 770.8 L279.0 771.3 L278.5 771.3 L278.0 770.8 L277.5 770.6 L277.0 770.5 L276.5 769.8 L276.0 769.5 L276.0 770.2 L275.5 770.1 L275.0 770.8 L274.5 770.0 L274.0 770.2 L273.5 770.3 L273.0 769.9 L272.5 770.0 L272.0 770.2 L271.5 770.6 L271.0 770.0 L270.5 770.5 L270.0 770.2 L269.5 769.7 L269.0 770.2 L268.5 770.3 L268.0 770.3 L267.5 770.0 L267.0 770.2 L266.5 769.8 L266.0 770.3 L266.0 769.6 L265.5 769.5 L265.0 770.0 L264.5 770.1 L264.0 770.2 L263.5 770.8 L263.0 771.3 L262.5 771.2 L262.0 771.2 L261.5 772.2 L261.0 773.1 L260.5 773.7 L260.0 771.6 L259.5 771.5 L259.0 772.4 L258.5 771.5 L258.0 773.6 L257.5 772.3 L257.0 772.7 L256.5 773.2 L256.0 772.6 L255.5 772.8 L255.0 772.7 L254.5 772.1 L254.0 773.4 L253.5 772.4 L253.0 771.9 L252.5 771.1 L252.0 772.1 L251.5 770.9 L251.0 771.2 L250.5 770.5 L250.0 771.3 L249.5 770.1 L249.0 770.2 L248.5 769.7 L248.0 769.5 L248.0 770.1 L247.5 770.0 L247.0 770.2 L246.5 769.7 L246.0 770.3 L245.5 769.9 L245.0 770.3 L244.5 770.2 L244.0 770.0 L243.5 770.1 L243.0 770.2 L242.5 770.5 L242.0 770.3 L241.5 769.9 L241.0 770.4 L240.5 770.6 L240.0 770.2 L240.0 769.5 L239.5 770.1 L239.0 770.3 L238.5 771.3 L238.0 772.8 L237.5 771.8 L237.0 771.5 L236.5 772.5 L236.0 773.0 L235.5 773.6 L235.0 772.1 L234.5 772.8 L234.0 772.8 L233.5 772.7 L233.0 772.5 L232.5 771.3 L232.0 771.1 L231.5 770.6 L231.0 770.4 L230.5 770.3 L230.0 769.5 L230.0 769.6 L229.5 769.5 L229.0 769.9 L228.5 770.3 L228.0 770.8 L227.5 770.7 L227.0 770.7 L226.5 771.0 L226.0 770.7 L225.5 772.1 L225.0 772.2 L224.5 771.9 L224.0 772.8 L223.5 772.6 L223.0 772.7 L222.5 772.3 L222.0 772.0 L221.5 771.7 L221.0 772.4 L220.5 771.7 L220.0 771.1 L219.5 771.2 L219.0 772.4 L218.5 771.3 L218.0 771.8 L217.5 772.0 L217.0 771.1 L216.5 770.3 L216.0 770.3 L215.5 769.9 L215.0 769.8 L214.5 769.5 L214.0 769.5 L214.0 769.6 L213.5 769.6 L213.0 770.1 L212.5 770.4 L212.0 770.3 L211.5 770.5 L211.0 770.8 L210.5 770.7 L210.0 772.1 L209.5 770.9 L209.0 773.1 L208.5 772.2 L208.0 771.5 L207.5 771.7 L207.0 771.7 L206.5 772.3 L206.0 771.1 L205.5 771.6 L205.0 771.9 L204.5 770.9 L204.0 771.0 L203.5 771.3 L203.0 771.0 L202.5 770.7 L202.0 771.1 L201.5 770.3 L201.0 769.6 L200.5 769.5 L200.0 769.5 L199.0 770.3 L198.5 770.7 L198.0 770.2 L197.5 770.7 L197.0 770.5 L196.5 770.2 L196.0 769.9 L195.5 769.9 L195.0 770.6 L194.5 770.7 L194.0 770.9 L193.5 770.6 L193.0 770.1 L192.5 770.5 L192.0 770.6 L191.5 770.2 L191.0 770.7 L190.5 770.6 L190.0 770.3 L189.5 770.7 L189.0 770.5 L188.5 770.4 L188.0 770.1 L187.5 769.9 L187.0 770.1 L186.5 770.0 L186.0 770.1 L185.5 770.2 L185.0 769.9Z M309.0 768.4 L309.5 767.8 L310.0 766.8 L310.5 765.7 L311.0 765.9 L311.5 763.7 L312.0 764.8 L312.5 763.9 L313.0 764.5 L313.5 762.4 L314.0 763.3 L314.5 759.9 L315.0 762.3 L315.5 759.4 L316.0 762.0 L316.5 761.0 L317.0 760.6 L317.5 760.8 L318.0 761.2 L318.5 763.2 L319.0 762.7 L319.5 765.3 L320.0 765.4 L320.5 766.5 L321.0 766.2 L321.5 767.9 L322.0 768.4 L322.0 768.4 L322.5 767.6 L323.0 766.7 L323.5 766.0 L324.0 765.1 L324.5 764.3 L325.0 765.1 L325.5 763.7 L326.0 763.1 L326.5 764.4 L327.0 764.2 L327.5 765.2 L328.0 765.7 L328.5 765.5 L329.0 766.3 L329.5 767.5 L330.0 768.4 L330.0 767.6 L330.5 767.3 L331.0 767.5 L331.5 767.7 L332.0 768.0 L332.5 767.7 L333.0 767.3 L333.5 767.4 L334.0 768.0 L334.5 767.6 L335.0 767.6 L335.5 767.5 L336.0 767.6 L336.5 767.8 L337.0 767.6 L337.5 768.0 L338.0 768.0 L338.5 767.7 L339.0 768.0 L339.5 767.9 L340.0 767.5 L340.5 767.3 L341.0 767.6 L341.5 768.0 L342.0 767.8 L342.5 767.5 L343.0 767.3 L343.5 767.7 L344.0 767.7 L344.5 767.5 L345.0 767.5 L345.5 767.8 L346.0 767.7 L346.5 767.8 L347.0 768.0 L347.5 767.5 L348.0 767.7 L348.0 768.4 L348.5 768.2 L349.0 768.1 L349.5 767.8 L350.0 767.6 L350.5 766.9 L351.0 766.6 L351.5 767.2 L352.0 767.3 L352.5 767.8 L353.0 767.6 L353.5 768.4 L354.0 768.4 L354.0 768.1 L354.5 767.9 L355.0 767.7 L355.5 768.1 L356.0 768.2 L356.5 768.1 L357.0 768.3 L357.5 768.3 L358.0 767.8 L358.5 768.1 L359.0 767.9 L359.5 767.8 L360.0 768.1 L360.5 768.3 L361.0 767.9 L361.5 768.3 L362.0 767.8 L362.5 767.8 L363.0 768.1 L363.5 768.2 L364.0 768.2 L364.5 768.0 L365.0 767.9 L365.5 767.9 L366.0 767.8 L366.5 768.1 L367.0 767.8 L367.5 767.9 L368.0 768.2 L368.5 767.9 L369.0 767.8 L369.5 767.7 L370.0 768.1 L370.5 768.0 L371.0 768.0 L371.5 768.1 L372.0 767.9 L372.0 770.1 L371.5 769.9 L371.0 770.0 L370.5 770.0 L370.0 769.9 L369.5 770.1 L369.0 770.0 L368.5 770.2 L368.0 769.7 L367.5 769.8 L367.0 770.0 L366.5 769.8 L366.0 770.1 L365.5 769.9 L365.0 769.9 L364.5 770.0 L364.0 769.8 L363.5 769.6 L363.0 769.7 L362.5 770.1 L362.0 770.0 L361.5 769.7 L361.0 770.0 L360.5 769.7 L360.0 769.7 L359.5 770.0 L359.0 770.0 L358.5 769.8 L358.0 770.0 L357.5 769.6 L357.0 769.7 L356.5 769.8 L356.0 769.7 L355.5 769.9 L355.0 770.2 L354.5 769.9 L354.0 769.8 L354.0 769.6 L353.5 769.5 L353.0 770.3 L352.5 770.2 L352.0 770.4 L351.5 770.8 L351.0 771.2 L350.5 770.7 L350.0 770.3 L349.5 770.0 L349.0 769.8 L348.5 769.6 L348.0 769.5 L348.0 770.4 L347.5 770.3 L347.0 769.8 L346.5 769.9 L346.0 770.3 L345.5 770.3 L345.0 770.2 L344.5 770.2 L344.0 770.1 L343.5 770.3 L343.0 770.6 L342.5 770.2 L342.0 770.1 L341.5 770.0 L341.0 770.4 L340.5 770.5 L340.0 770.3 L339.5 770.0 L339.0 770.0 L338.5 770.3 L338.0 770.0 L337.5 769.8 L337.0 770.2 L336.5 770.0 L336.0 770.4 L335.5 770.2 L335.0 770.2 L334.5 770.1 L334.0 769.9 L333.5 770.7 L333.0 770.4 L332.5 770.4 L332.0 770.1 L331.5 770.3 L331.0 770.6 L330.5 770.3 L330.0 770.2 L330.0 769.5 L329.5 770.5 L329.0 771.1 L328.5 771.7 L328.0 771.9 L327.5 772.3 L327.0 772.7 L326.5 772.7 L326.0 774.8 L325.5 773.4 L325.0 772.7 L324.5 773.1 L324.0 772.7 L323.5 771.8 L323.0 771.0 L322.5 770.3 L322.0 769.5 L322.0 769.5 L321.5 770.0 L321.0 771.8 L320.5 771.1 L320.0 772.1 L319.5 772.2 L319.0 774.1 L318.5 774.9 L318.0 775.3 L317.5 775.5 L317.0 776.8 L316.5 775.9 L316.0 774.4 L315.5 779.0 L315.0 774.3 L314.5 778.5 L314.0 774.2 L313.5 775.8 L313.0 772.7 L312.5 773.6 L312.0 772.9 L311.5 774.5 L311.0 771.9 L310.5 771.6 L310.0 771.2 L309.5 770.2 L309.0 769.6Z M427.0 768.4 L427.5 767.9 L428.0 767.5 L428.5 767.2 L429.0 766.8 L429.5 766.8 L430.0 766.0 L430.5 766.1 L431.0 764.2 L431.5 763.9 L432.0 765.5 L432.5 765.1 L433.0 764.7 L433.5 766.3 L434.0 764.6 L434.5 766.4 L435.0 766.7 L435.5 766.2 L436.0 767.3 L436.5 768.1 L437.0 768.4 L438.0 768.4 L438.5 766.4 L439.0 765.1 L439.5 762.4 L440.0 760.6 L440.5 756.6 L441.0 757.2 L441.5 762.5 L442.0 761.7 L442.5 762.6 L443.0 763.2 L443.5 764.8 L444.0 768.4 L444.0 768.4 L444.5 768.0 L445.0 768.0 L445.5 767.4 L446.0 767.3 L446.5 766.6 L447.0 766.3 L447.5 766.0 L448.0 765.0 L448.5 766.2 L449.0 766.4 L449.5 765.1 L450.0 764.9 L450.5 765.4 L451.0 764.5 L451.5 765.0 L452.0 766.6 L452.5 766.2 L453.0 767.0 L453.5 767.4 L454.0 767.5 L454.5 768.0 L455.0 768.4 L455.0 768.1 L455.5 767.8 L456.0 768.0 L456.5 767.7 L457.0 768.1 L457.5 767.8 L458.0 768.2 L458.5 767.8 L459.0 768.1 L459.5 768.0 L460.0 767.8 L460.0 768.4 L460.5 767.5 L461.0 767.4 L461.5 766.9 L462.0 765.0 L462.5 765.1 L463.0 765.8 L463.5 765.3 L464.0 764.0 L464.5 763.4 L465.0 762.2 L465.5 762.5 L466.0 764.3 L466.5 763.4 L467.0 760.9 L467.5 761.6 L468.0 762.1 L468.5 761.3 L469.0 761.7 L469.5 762.3 L470.0 763.3 L470.5 764.1 L471.0 764.8 L471.5 763.2 L472.0 764.2 L472.5 765.4 L473.0 765.9 L473.5 766.4 L474.0 767.4 L474.5 767.7 L475.0 768.4 L475.0 768.4 L475.5 768.3 L476.0 767.2 L476.5 767.6 L477.0 766.9 L477.5 766.9 L478.0 766.0 L478.5 766.3 L479.0 766.6 L479.5 766.6 L480.0 767.2 L480.5 767.4 L481.0 768.0 L481.5 768.4 L482.0 768.4 L482.0 769.6 L481.5 769.5 L481.0 769.9 L480.5 770.2 L480.0 770.8 L479.5 771.4 L479.0 771.3 L478.5 771.7 L478.0 771.7 L477.5 771.0 L477.0 771.0 L476.5 770.3 L476.0 770.6 L475.5 769.7 L475.0 769.5 L475.0 769.6 L474.5 770.2 L474.0 770.5 L473.5 771.7 L473.0 771.7 L472.5 772.2 L472.0 772.9 L471.5 774.6 L471.0 772.7 L470.5 773.6 L470.0 774.1 L469.5 775.4 L469.0 776.0 L468.5 776.8 L468.0 774.6 L467.5 776.2 L467.0 776.1 L466.5 774.5 L466.0 773.4 L465.5 774.8 L465.0 775.1 L464.5 774.5 L464.0 772.8 L463.5 772.0 L463.0 772.0 L462.5 772.4 L462.0 773.0 L461.5 770.8 L461.0 770.7 L460.5 770.4 L460.0 769.5 L460.0 769.9 L459.5 769.9 L459.0 769.7 L458.5 770.2 L458.0 769.7 L457.5 770.0 L457.0 769.8 L456.5 770.2 L456.0 769.8 L455.5 770.2 L455.0 769.9 L455.0 769.5 L454.5 769.9 L454.0 770.4 L453.5 770.4 L453.0 771.0 L452.5 771.6 L452.0 771.0 L451.5 772.1 L451.0 772.5 L450.5 772.1 L450.0 772.5 L449.5 772.9 L449.0 771.6 L448.5 771.6 L448.0 772.6 L447.5 771.5 L447.0 771.8 L446.5 771.4 L446.0 770.6 L445.5 770.6 L445.0 769.9 L444.5 770.0 L444.0 769.5 L444.0 769.5 L443.5 772.3 L443.0 773.7 L442.5 775.2 L442.0 776.2 L441.5 774.7 L441.0 780.0 L440.5 780.2 L440.0 776.1 L439.5 775.3 L439.0 772.3 L438.5 771.3 L438.0 769.5 L437.0 769.5 L436.5 769.8 L436.0 770.7 L435.5 771.8 L435.0 770.8 L434.5 771.1 L434.0 773.5 L433.5 771.8 L433.0 773.4 L432.5 772.8 L432.0 772.2 L431.5 773.9 L431.0 773.5 L430.5 771.2 L430.0 771.4 L429.5 771.3 L429.0 770.6 L428.5 770.8 L428.0 770.4 L427.5 769.9 L427.0 769.6Z M485.0 768.0 L485.5 768.0 L486.0 767.6 L486.5 768.1 L487.0 768.0 L487.5 768.2 L488.0 767.8 L488.5 767.9 L489.0 768.0 L489.5 767.9 L490.0 767.7 L490.0 768.4 L490.5 767.4 L491.0 766.0 L491.5 765.2 L492.0 765.8 L492.5 765.4 L493.0 765.8 L493.5 765.2 L494.0 765.4 L494.5 765.8 L495.0 766.4 L495.5 767.4 L496.0 768.4 L496.0 768.4 L496.5 767.5 L497.0 765.5 L497.5 765.6 L498.0 763.0 L498.5 764.3 L499.0 763.8 L499.5 763.7 L500.0 761.7 L500.5 764.1 L501.0 763.2 L501.5 764.0 L502.0 765.1 L502.5 767.4 L503.0 768.4 L503.0 768.4 L503.5 768.4 L504.0 768.2 L504.5 767.7 L505.0 767.5 L505.5 767.4 L506.0 767.1 L506.5 767.3 L507.0 766.4 L507.5 765.7 L508.0 766.1 L508.5 765.0 L509.0 765.7 L509.5 766.6 L510.0 764.9 L510.5 765.2 L511.0 764.6 L511.5 763.5 L512.0 764.1 L512.5 765.2 L513.0 765.0 L513.5 764.1 L514.0 764.6 L514.5 763.8 L515.0 762.6 L515.5 762.8 L516.0 764.1 L516.5 764.0 L517.0 763.0 L517.5 763.7 L518.0 763.6 L518.5 762.6 L519.0 764.8 L519.5 762.8 L520.0 765.1 L520.5 764.9 L521.0 761.9 L521.5 762.7 L522.0 762.1 L522.5 763.4 L523.0 763.8 L523.5 763.9 L524.0 763.6 L524.5 763.2 L525.0 764.8 L525.5 763.5 L526.0 764.2 L526.5 764.4 L527.0 765.1 L527.5 765.5 L528.0 765.4 L528.5 764.8 L529.0 766.3 L529.5 766.6 L530.0 765.8 L530.5 765.8 L531.0 767.1 L531.5 766.4 L532.0 766.2 L532.5 767.2 L533.0 767.4 L533.5 768.1 L534.0 768.4 L534.5 768.4 L535.0 768.4 L535.0 768.4 L535.5 768.4 L536.0 768.3 L536.5 768.4 L537.0 767.8 L537.5 767.5 L538.0 767.3 L538.5 767.2 L539.0 767.3 L539.5 766.8 L540.0 767.6 L540.5 766.3 L541.0 766.6 L541.5 766.6 L542.0 765.9 L542.5 766.1 L543.0 766.1 L543.5 766.7 L544.0 765.9 L544.5 765.1 L545.0 765.3 L545.5 763.9 L546.0 764.8 L546.5 766.0 L547.0 765.0 L547.5 765.3 L548.0 763.3 L548.5 763.9 L549.0 764.3 L549.5 764.5 L550.0 764.2 L550.5 764.0 L551.0 765.5 L551.5 764.0 L552.0 762.5 L552.5 764.8 L553.0 762.6 L553.5 763.7 L554.0 763.3 L554.5 763.2 L555.0 763.7 L555.5 762.8 L556.0 763.9 L556.5 761.7 L557.0 763.2 L557.5 764.0 L558.0 764.1 L558.5 761.9 L559.0 764.1 L559.5 761.7 L560.0 762.6 L560.5 762.1 L561.0 763.8 L561.5 764.2 L562.0 763.9 L562.5 763.2 L563.0 763.1 L563.5 764.2 L564.0 762.0 L564.5 765.0 L565.0 762.6 L565.5 762.9 L566.0 763.0 L566.5 764.6 L567.0 762.3 L567.5 763.7 L568.0 763.6 L568.5 762.7 L569.0 762.7 L569.5 764.3 L570.0 764.6 L570.5 765.1 L571.0 764.3 L571.5 764.9 L572.0 763.5 L572.5 764.1 L573.0 765.3 L573.5 765.0 L574.0 764.4 L574.5 764.8 L575.0 765.6 L575.5 764.3 L576.0 765.7 L576.5 765.7 L577.0 764.5 L577.5 765.0 L578.0 765.5 L578.5 766.1 L579.0 766.9 L579.5 765.8 L580.0 766.0 L580.5 766.3 L581.0 767.2 L581.5 767.3 L582.0 767.3 L582.5 767.6 L583.0 767.3 L583.5 767.4 L584.0 768.1 L584.5 768.2 L585.0 768.3 L585.5 768.4 L586.0 768.4 L586.0 767.3 L586.5 767.6 L587.0 767.4 L587.5 767.6 L588.0 768.0 L588.5 767.6 L589.0 767.9 L589.5 767.8 L590.0 767.9 L590.5 767.4 L591.0 768.0 L591.5 768.0 L592.0 768.0 L592.5 768.0 L593.0 767.5 L593.5 767.6 L594.0 767.8 L594.5 767.8 L595.0 767.5 L595.5 768.0 L596.0 767.4 L596.5 767.4 L597.0 767.2 L597.5 767.4 L598.0 768.0 L598.5 767.6 L599.0 768.0 L600.0 768.4 L600.5 768.4 L601.0 768.3 L601.5 767.6 L602.0 767.8 L602.5 767.0 L603.0 767.2 L603.5 766.7 L604.0 766.5 L604.5 766.8 L605.0 765.7 L605.5 765.4 L606.0 765.0 L606.5 765.0 L607.0 765.7 L607.5 765.1 L608.0 764.7 L608.5 765.8 L609.0 765.2 L609.5 765.1 L610.0 766.1 L610.5 765.4 L611.0 766.3 L611.5 764.7 L612.0 765.6 L612.5 765.4 L613.0 766.2 L613.5 764.8 L614.0 766.0 L614.5 766.3 L615.0 765.5 L615.5 766.7 L616.0 766.7 L616.5 767.2 L617.0 766.7 L617.5 767.8 L618.0 767.6 L618.5 767.7 L619.0 767.9 L619.5 768.4 L620.0 768.4 L620.0 769.5 L619.5 769.5 L619.0 770.1 L618.5 770.0 L618.0 770.3 L617.5 770.1 L617.0 770.8 L616.5 770.4 L616.0 771.3 L615.5 770.8 L615.0 771.8 L614.5 771.1 L614.0 771.7 L613.5 772.8 L613.0 771.8 L612.5 772.5 L612.0 772.3 L611.5 773.3 L611.0 771.6 L610.5 772.2 L610.0 771.6 L609.5 772.6 L609.0 772.1 L608.5 772.2 L608.0 772.6 L607.5 772.5 L607.0 771.5 L606.5 773.1 L606.0 772.4 L605.5 771.8 L605.0 771.9 L604.5 770.7 L604.0 771.3 L603.5 771.2 L603.0 770.5 L602.5 770.8 L602.0 770.0 L601.5 770.1 L601.0 769.7 L600.5 769.5 L600.0 769.5 L599.0 769.9 L598.5 770.2 L598.0 769.8 L597.5 770.3 L597.0 770.3 L596.5 770.3 L596.0 770.2 L595.5 769.8 L595.0 770.5 L594.5 770.2 L594.0 770.0 L593.5 770.2 L593.0 770.2 L592.5 770.0 L592.0 770.0 L591.5 770.1 L591.0 769.9 L590.5 770.4 L590.0 769.9 L589.5 770.1 L589.0 770.1 L588.5 770.3 L588.0 769.8 L587.5 770.1 L587.0 770.4 L586.5 770.2 L586.0 770.6 L586.0 769.6 L585.5 769.5 L585.0 769.7 L584.5 769.8 L584.0 769.9 L583.5 770.3 L583.0 770.3 L582.5 770.1 L582.0 770.3 L581.5 770.3 L581.0 770.5 L580.5 771.6 L580.0 771.5 L579.5 772.3 L579.0 770.7 L578.5 772.0 L578.0 772.3 L577.5 772.1 L577.0 773.6 L576.5 771.8 L576.0 771.5 L575.5 773.9 L575.0 771.7 L574.5 772.7 L574.0 773.8 L573.5 772.6 L573.0 772.9 L572.5 773.3 L572.0 773.2 L571.5 773.2 L571.0 773.7 L570.5 772.0 L570.0 772.6 L569.5 772.6 L569.0 775.5 L568.5 775.2 L568.0 773.7 L567.5 773.4 L567.0 775.0 L566.5 773.6 L566.0 773.6 L565.5 774.2 L565.0 774.1 L564.5 772.7 L564.0 775.0 L563.5 772.7 L563.0 774.4 L562.5 774.4 L562.0 773.9 L561.5 772.9 L561.0 773.8 L560.5 775.3 L560.0 775.5 L559.5 775.0 L559.0 773.9 L558.5 775.3 L558.0 773.8 L557.5 773.1 L557.0 774.6 L556.5 775.0 L556.0 774.0 L555.5 775.1 L555.0 773.1 L554.5 775.0 L554.0 774.6 L553.5 773.4 L553.0 775.4 L552.5 773.2 L552.0 775.6 L551.5 773.6 L551.0 771.9 L550.5 773.2 L550.0 773.9 L549.5 773.3 L549.0 773.8 L548.5 773.3 L548.0 774.7 L547.5 772.5 L547.0 773.0 L546.5 772.1 L546.0 772.5 L545.5 774.0 L545.0 772.7 L544.5 772.5 L544.0 771.9 L543.5 771.3 L543.0 771.8 L542.5 771.7 L542.0 771.4 L541.5 771.4 L541.0 771.3 L540.5 771.1 L540.0 770.4 L539.5 770.7 L539.0 770.8 L538.5 770.9 L538.0 770.7 L537.5 770.2 L537.0 770.2 L536.5 769.6 L536.0 769.6 L535.5 769.5 L535.0 769.5 L535.0 769.6 L534.5 769.6 L534.0 769.6 L533.5 769.7 L533.0 770.3 L532.5 770.4 L532.0 771.5 L531.5 771.6 L531.0 770.6 L530.5 771.8 L530.0 771.9 L529.5 770.9 L529.0 771.5 L528.5 773.3 L528.0 772.2 L527.5 772.1 L527.0 772.2 L526.5 773.5 L526.0 773.1 L525.5 774.6 L525.0 772.2 L524.5 773.5 L524.0 773.8 L523.5 773.2 L523.0 773.8 L522.5 774.2 L522.0 775.4 L521.5 775.2 L521.0 775.7 L520.5 772.3 L520.0 772.3 L519.5 774.7 L519.0 773.1 L518.5 775.3 L518.0 774.0 L517.5 773.5 L517.0 774.9 L516.5 774.2 L516.0 773.1 L515.5 774.4 L515.0 774.4 L514.5 773.8 L514.0 772.9 L513.5 773.8 L513.0 772.6 L512.5 772.8 L512.0 773.6 L511.5 773.2 L511.0 773.0 L510.5 772.9 L510.0 773.3 L509.5 771.3 L509.0 772.1 L508.5 772.1 L508.0 771.6 L507.5 772.3 L507.0 771.4 L506.5 770.7 L506.0 770.9 L505.5 770.5 L505.0 770.2 L504.5 770.0 L504.0 769.6 L503.5 769.5 L503.0 769.6 L503.0 769.6 L502.5 770.5 L502.0 772.9 L501.5 774.1 L501.0 774.7 L500.5 773.9 L500.0 776.2 L499.5 773.2 L499.0 774.1 L498.5 772.7 L498.0 773.9 L497.5 772.5 L497.0 771.7 L496.5 770.5 L496.0 769.6 L496.0 769.6 L495.5 770.7 L495.0 771.3 L494.5 772.0 L494.0 772.2 L493.5 772.2 L493.0 772.0 L492.5 771.9 L492.0 771.7 L491.5 772.1 L491.0 771.6 L490.5 770.3 L490.0 769.5 L490.0 770.3 L489.5 770.0 L489.0 770.0 L488.5 770.0 L488.0 770.2 L487.5 769.8 L487.0 769.8 L486.5 769.9 L486.0 770.3 L485.5 770.0 L485.0 769.9Z M622.0 767.7 L622.5 767.5 L623.0 767.3 L623.5 767.7 L624.0 767.2 L624.5 767.3 L625.0 767.7 L625.5 767.2 L626.0 767.5 L626.0 768.4 L626.5 767.1 L627.0 765.7 L627.5 763.9 L628.0 762.2 L628.5 763.7 L629.0 759.0 L629.5 761.7 L630.0 760.1 L630.5 761.4 L631.0 762.6 L631.5 764.1 L632.0 761.2 L632.5 762.5 L633.0 764.4 L633.5 766.3 L634.0 768.4 L634.0 768.4 L634.5 767.8 L635.0 766.9 L635.5 766.5 L636.0 765.5 L636.5 765.8 L637.0 765.6 L637.5 762.9 L638.0 764.4 L638.5 763.6 L639.0 765.0 L639.5 764.8 L640.0 764.4 L640.5 764.9 L641.0 762.8 L641.5 763.9 L642.0 765.4 L642.5 765.5 L643.0 766.0 L643.5 766.7 L644.0 767.3 L644.5 767.9 L645.0 768.4 L645.0 767.8 L645.5 767.9 L646.0 768.0 L646.5 768.0 L647.0 768.1 L647.5 767.7 L648.0 768.3 L648.5 768.0 L649.0 768.1 L649.5 767.6 L650.0 768.1 L650.0 768.4 L650.5 768.2 L651.0 767.5 L651.5 767.0 L652.0 766.7 L652.5 766.5 L653.0 766.3 L653.5 766.0 L654.0 765.8 L654.5 766.2 L655.0 766.2 L655.5 766.3 L656.0 767.0 L656.5 767.6 L657.0 767.7 L657.5 768.3 L658.0 768.4 L658.0 769.5 L657.5 769.6 L657.0 770.1 L656.5 770.3 L656.0 770.8 L655.5 771.7 L655.0 771.4 L654.5 771.9 L654.0 771.9 L653.5 771.2 L653.0 771.1 L652.5 771.4 L652.0 771.1 L651.5 770.9 L651.0 770.4 L650.5 769.8 L650.0 769.6 L650.0 769.8 L649.5 770.4 L649.0 769.7 L648.5 769.9 L648.0 769.6 L647.5 770.1 L647.0 769.7 L646.5 770.0 L646.0 770.1 L645.5 770.0 L645.0 770.0 L645.0 769.5 L644.5 770.1 L644.0 770.5 L643.5 770.9 L643.0 771.7 L642.5 772.2 L642.0 772.4 L641.5 773.8 L641.0 774.8 L640.5 772.8 L640.0 772.8 L639.5 772.7 L639.0 772.2 L638.5 773.3 L638.0 773.1 L637.5 774.5 L637.0 772.2 L636.5 772.0 L636.0 771.9 L635.5 771.2 L635.0 770.7 L634.5 770.3 L634.0 769.5 L634.0 769.5 L633.5 771.0 L633.0 773.6 L632.5 775.1 L632.0 776.6 L631.5 772.9 L631.0 774.7 L630.5 774.8 L630.0 776.7 L629.5 775.4 L629.0 779.3 L628.5 773.8 L628.0 775.8 L627.5 774.2 L627.0 772.5 L626.5 770.6 L626.0 769.5 L626.0 770.5 L625.5 770.6 L625.0 770.1 L624.5 770.7 L624.0 770.4 L623.5 770.2 L623.0 770.7 L622.5 770.2 L622.0 770.0Z M660.0 767.8 L660.5 767.9 L661.0 768.0 L661.5 768.1 L662.0 767.8 L662.5 767.7 L663.0 767.9 L663.5 767.7 L664.0 767.9 L664.5 768.1 L665.0 767.8 L665.0 768.4 L665.5 768.4 L666.0 768.1 L666.5 767.7 L667.0 767.7 L667.5 767.6 L668.0 767.1 L668.5 767.4 L669.0 766.7 L669.5 766.2 L670.0 765.4 L670.5 766.2 L671.0 765.4 L671.5 766.0 L672.0 766.3 L672.5 764.3 L673.0 765.0 L673.5 764.1 L674.0 764.4 L674.5 764.5 L675.0 766.0 L675.5 764.9 L676.0 765.3 L676.5 764.1 L677.0 764.8 L677.5 764.3 L678.0 765.2 L678.5 765.5 L679.0 765.9 L679.5 763.8 L680.0 764.2 L680.5 764.8 L681.0 765.6 L681.5 765.4 L682.0 765.6 L682.5 766.2 L683.0 764.9 L683.5 766.3 L684.0 765.7 L684.5 765.9 L685.0 767.1 L685.5 766.4 L686.0 766.4 L686.5 767.2 L687.0 767.4 L687.5 767.2 L688.0 767.6 L688.5 768.2 L689.0 768.2 L689.5 768.4 L690.0 768.4 L690.0 768.4 L690.5 768.3 L691.0 767.4 L691.5 767.1 L692.0 767.0 L692.5 767.1 L693.0 765.9 L693.5 766.0 L694.0 765.3 L694.5 765.6 L695.0 765.3 L695.5 764.1 L696.0 765.1 L696.5 764.6 L697.0 764.5 L697.5 765.1 L698.0 764.6 L698.5 765.2 L699.0 765.5 L699.5 765.0 L700.0 765.9 L700.5 766.0 L701.0 764.6 L701.5 765.7 L702.0 765.6 L702.5 766.8 L703.0 767.2 L703.5 767.6 L704.0 767.7 L704.5 768.2 L705.0 768.4 L705.0 767.6 L705.5 767.9 L706.0 767.8 L706.5 767.7 L707.0 768.0 L707.5 768.1 L708.0 768.0 L708.5 767.8 L709.0 767.9 L709.5 768.1 L710.0 768.0 L710.0 768.4 L710.5 768.4 L711.0 768.2 L711.5 767.9 L712.0 767.9 L712.5 767.6 L713.0 766.6 L713.5 766.3 L714.0 767.1 L714.5 767.2 L715.0 766.5 L715.5 767.0 L716.0 766.6 L716.5 766.4 L717.0 766.8 L717.5 767.5 L718.0 767.2 L718.5 768.1 L719.0 768.3 L719.5 768.4 L720.0 768.4 L720.0 769.5 L719.5 769.5 L719.0 769.5 L718.5 769.7 L718.0 770.7 L717.5 770.5 L717.0 770.8 L716.5 771.2 L716.0 770.9 L715.5 770.9 L715.0 771.2 L714.5 770.7 L714.0 770.6 L713.5 771.7 L713.0 771.4 L712.5 770.3 L712.0 770.0 L711.5 769.9 L711.0 769.7 L710.5 769.5 L710.0 769.6 L710.0 769.9 L709.5 769.9 L709.0 769.9 L708.5 770.0 L708.0 770.0 L707.5 769.9 L707.0 769.9 L706.5 770.0 L706.0 770.0 L705.5 769.9 L705.0 770.3 L705.0 769.5 L704.5 769.6 L704.0 770.1 L703.5 770.5 L703.0 770.9 L702.5 771.1 L702.0 771.7 L701.5 772.3 L701.0 772.5 L700.5 771.5 L700.0 772.0 L699.5 772.4 L699.0 771.6 L698.5 772.1 L698.0 772.6 L697.5 772.9 L697.0 772.4 L696.5 772.8 L696.0 772.1 L695.5 773.1 L695.0 772.0 L694.5 771.7 L694.0 772.6 L693.5 772.0 L693.0 771.5 L692.5 770.7 L692.0 771.1 L691.5 771.0 L691.0 770.4 L690.5 769.7 L690.0 769.6 L690.0 769.5 L689.5 769.6 L689.0 769.8 L688.5 769.8 L688.0 770.2 L687.5 770.6 L687.0 770.6 L686.5 770.5 L686.0 771.2 L685.5 771.2 L685.0 770.4 L684.5 772.1 L684.0 772.3 L683.5 771.2 L683.0 772.2 L682.5 771.2 L682.0 772.0 L681.5 772.7 L681.0 772.2 L680.5 772.9 L680.0 772.9 L679.5 773.8 L679.0 771.6 L678.5 772.3 L678.0 772.8 L677.5 772.6 L677.0 773.4 L676.5 773.6 L676.0 772.0 L675.5 772.7 L675.0 771.5 L674.5 772.9 L674.0 773.8 L673.5 773.7 L673.0 772.1 L672.5 773.6 L672.0 771.3 L671.5 771.9 L671.0 772.1 L670.5 771.7 L670.0 772.3 L669.5 771.9 L669.0 771.1 L668.5 770.4 L668.0 770.7 L667.5 770.5 L667.0 770.2 L666.5 770.1 L666.0 769.8 L665.5 769.6 L665.0 769.6 L665.0 770.1 L664.5 769.7 L664.0 770.1 L663.5 770.1 L663.0 770.1 L662.5 770.1 L662.0 769.9 L661.5 769.9 L661.0 769.8 L660.5 770.0 L660.0 770.2Z M725.0 767.7 L725.5 767.6 L726.0 767.8 L726.5 768.0 L727.0 768.1 L727.5 767.7 L728.0 768.0 L728.5 767.6 L729.0 768.1 L729.5 768.1 L730.0 768.1 L730.5 767.9 L731.0 767.8 L731.5 767.7 L732.0 768.0 L732.5 767.6 L733.0 767.6 L733.5 767.9 L734.0 767.9 L734.5 768.2 L735.0 767.9 L735.0 768.4 L735.5 768.3 L736.0 767.9 L736.5 767.9 L737.0 767.0 L737.5 767.0 L738.0 767.2 L738.5 766.5 L739.0 766.6 L739.5 766.1 L740.0 766.9 L740.5 766.5 L741.0 765.8 L741.5 766.7 L742.0 767.1 L742.5 767.1 L743.0 767.3 L743.5 768.0 L744.0 768.0 L744.5 768.3 L745.0 768.4 L745.0 767.9 L745.5 768.1 L746.0 768.1 L746.5 768.1 L747.0 768.1 L747.5 768.0 L748.0 768.1 L748.5 767.5 L749.0 768.1 L749.5 767.7 L750.0 768.3 L750.5 768.0 L751.0 767.9 L751.5 767.6 L752.0 767.8 L752.5 767.8 L753.0 768.1 L753.5 768.3 L754.0 767.8 L754.5 768.1 L755.0 767.6 L755.5 768.0 L756.0 767.7 L756.5 768.1 L757.0 767.9 L757.5 768.0 L758.0 768.0 L758.5 768.0 L759.0 767.8 L759.5 767.7 L760.0 767.7 L760.5 768.1 L761.0 768.1 L761.5 767.8 L762.0 767.7 L762.5 767.9 L763.0 768.1 L763.5 768.0 L764.0 767.9 L764.5 767.8 L765.0 767.7 L765.0 768.4 L765.5 768.1 L766.0 767.7 L766.5 766.9 L767.0 765.9 L767.5 766.2 L768.0 765.3 L768.5 765.8 L769.0 765.5 L769.5 764.3 L770.0 764.2 L770.5 763.5 L771.0 763.7 L771.5 764.1 L772.0 765.4 L772.5 764.5 L773.0 765.8 L773.5 766.5 L774.0 767.1 L774.5 766.6 L775.0 767.7 L775.5 768.1 L776.0 768.4 L776.0 767.2 L776.5 767.6 L777.0 766.9 L777.5 767.7 L778.0 767.7 L778.5 767.5 L779.0 767.4 L779.5 767.6 L780.0 767.6 L780.5 767.2 L781.0 767.4 L781.5 767.5 L782.0 767.5 L782.5 767.2 L783.0 766.8 L783.5 767.6 L784.0 767.4 L785.0 768.4 L785.5 768.4 L786.0 768.0 L786.5 767.9 L787.0 767.8 L787.5 767.3 L788.0 766.5 L788.5 766.2 L789.0 766.3 L789.5 766.1 L790.0 766.8 L790.5 766.4 L791.0 765.8 L791.5 766.8 L792.0 766.2 L792.5 766.6 L793.0 767.0 L793.5 767.1 L794.0 767.7 L794.5 767.5 L795.0 768.1 L795.5 768.3 L796.0 768.4 L796.0 768.1 L796.5 768.0 L797.0 768.0 L797.5 768.0 L798.0 767.8 L798.5 767.9 L799.0 767.6 L799.5 767.9 L800.0 767.8 L800.5 767.7 L801.0 768.1 L801.5 768.0 L802.0 768.0 L802.5 767.7 L803.0 767.6 L803.5 768.1 L804.0 768.0 L804.5 767.9 L805.0 768.2 L805.0 768.4 L805.5 768.4 L806.0 768.4 L806.5 768.1 L807.0 767.7 L807.5 767.8 L808.0 767.1 L808.5 767.4 L809.0 767.4 L809.5 766.8 L810.0 765.8 L810.5 766.1 L811.0 765.4 L811.5 765.7 L812.0 766.2 L812.5 765.7 L813.0 765.0 L813.5 765.8 L814.0 764.6 L814.5 764.7 L815.0 764.9 L815.5 766.1 L816.0 765.8 L816.5 765.0 L817.0 765.2 L817.5 764.8 L818.0 765.6 L818.5 764.6 L819.0 764.6 L819.5 765.8 L820.0 765.1 L820.5 763.7 L821.0 763.0 L821.5 763.1 L822.0 765.5 L822.5 764.6 L823.0 765.5 L823.5 765.0 L824.0 765.7 L824.5 763.6 L825.0 765.2 L825.5 765.7 L826.0 764.9 L826.5 765.9 L827.0 765.3 L827.5 765.1 L828.0 764.9 L828.5 765.3 L829.0 765.3 L829.5 766.4 L830.0 766.9 L830.5 765.9 L831.0 765.8 L831.5 766.8 L832.0 766.6 L832.5 766.9 L833.0 767.8 L833.5 768.0 L834.0 767.9 L834.5 767.9 L835.0 768.2 L835.5 768.4 L836.0 768.4 L836.0 767.8 L836.5 768.0 L837.0 768.2 L837.5 767.9 L838.0 767.8 L838.5 767.8 L839.0 767.8 L839.5 767.8 L840.0 767.8 L840.5 767.9 L841.0 767.9 L841.5 767.8 L842.0 767.9 L842.5 767.8 L843.0 768.1 L843.5 767.9 L844.0 767.8 L844.5 767.8 L845.0 767.8 L845.0 769.9 L844.5 770.0 L844.0 770.0 L843.5 770.0 L843.0 769.7 L842.5 770.2 L842.0 769.9 L841.5 770.3 L841.0 769.9 L840.5 770.1 L840.0 770.0 L839.5 770.0 L839.0 770.1 L838.5 770.1 L838.0 770.1 L837.5 769.9 L837.0 769.7 L836.5 769.8 L836.0 770.2 L836.0 769.5 L835.5 769.6 L835.0 769.6 L834.5 769.9 L834.0 770.0 L833.5 769.9 L833.0 770.1 L832.5 770.8 L832.0 771.1 L831.5 771.2 L831.0 771.6 L830.5 771.9 L830.0 770.9 L829.5 771.0 L829.0 772.8 L828.5 771.8 L828.0 773.2 L827.5 772.2 L827.0 772.7 L826.5 771.5 L826.0 772.3 L825.5 771.8 L825.0 771.8 L824.5 773.5 L824.0 772.0 L823.5 773.0 L823.0 772.5 L822.5 773.6 L822.0 771.8 L821.5 774.5 L821.0 774.1 L820.5 773.9 L820.0 772.3 L819.5 771.5 L819.0 772.7 L818.5 772.9 L818.0 772.5 L817.5 772.3 L817.0 772.1 L816.5 772.4 L816.0 772.4 L815.5 771.4 L815.0 772.6 L814.5 772.7 L814.0 773.0 L813.5 772.2 L813.0 772.8 L812.5 772.3 L812.0 771.3 L811.5 772.1 L811.0 772.5 L810.5 771.9 L810.0 771.5 L809.5 771.3 L809.0 770.5 L808.5 770.4 L808.0 770.6 L807.5 769.9 L807.0 770.4 L806.5 769.7 L806.0 769.6 L805.5 769.5 L805.0 769.6 L805.0 769.7 L804.5 769.8 L804.0 770.0 L803.5 769.8 L803.0 770.3 L802.5 770.2 L802.0 769.8 L801.5 769.9 L801.0 769.9 L800.5 770.0 L800.0 770.2 L799.5 769.8 L799.0 770.0 L798.5 770.1 L798.0 770.1 L797.5 769.8 L797.0 770.0 L796.5 769.9 L796.0 769.9 L796.0 769.5 L795.5 769.6 L795.0 769.8 L794.5 770.3 L794.0 770.4 L793.5 770.9 L793.0 770.6 L792.5 770.8 L792.0 771.9 L791.5 770.9 L791.0 772.1 L790.5 771.5 L790.0 771.1 L789.5 771.9 L789.0 771.5 L788.5 771.6 L788.0 771.2 L787.5 770.4 L787.0 770.1 L786.5 769.9 L786.0 769.8 L785.5 769.5 L785.0 769.6 L784.0 770.3 L783.5 770.4 L783.0 771.1 L782.5 770.4 L782.0 770.4 L781.5 770.5 L781.0 770.2 L780.5 770.4 L780.0 770.2 L779.5 770.3 L779.0 770.5 L778.5 770.2 L778.0 770.0 L777.5 770.3 L777.0 770.9 L776.5 770.1 L776.0 770.5 L776.0 769.5 L775.5 769.8 L775.0 770.2 L774.5 771.2 L774.0 770.5 L773.5 771.6 L773.0 771.7 L772.5 773.0 L772.0 772.4 L771.5 773.5 L771.0 773.1 L770.5 774.1 L770.0 774.0 L769.5 773.8 L769.0 772.1 L768.5 771.5 L768.0 772.2 L767.5 771.5 L767.0 771.5 L766.5 771.1 L766.0 770.1 L765.5 769.8 L765.0 769.6 L765.0 770.1 L764.5 770.3 L764.0 769.8 L763.5 769.8 L763.0 769.7 L762.5 770.2 L762.0 770.0 L761.5 769.9 L761.0 769.7 L760.5 769.9 L760.0 770.3 L759.5 770.3 L759.0 770.1 L758.5 769.8 L758.0 770.0 L757.5 769.9 L757.0 769.9 L756.5 769.8 L756.0 770.3 L755.5 769.9 L755.0 770.4 L754.5 769.9 L754.0 770.0 L753.5 769.7 L753.0 769.7 L752.5 770.0 L752.0 770.3 L751.5 770.3 L751.0 769.9 L750.5 769.8 L750.0 769.7 L749.5 770.2 L749.0 769.8 L748.5 770.4 L748.0 769.7 L747.5 769.8 L747.0 769.8 L746.5 769.7 L746.0 769.8 L745.5 769.7 L745.0 769.9 L745.0 769.5 L744.5 769.7 L744.0 769.9 L743.5 770.0 L743.0 770.7 L742.5 770.9 L742.0 770.8 L741.5 771.3 L741.0 771.7 L740.5 771.2 L740.0 770.7 L739.5 771.8 L739.0 770.9 L738.5 771.0 L738.0 770.5 L737.5 770.7 L737.0 770.9 L736.5 770.0 L736.0 770.1 L735.5 769.6 L735.0 769.5 L735.0 770.0 L734.5 769.8 L734.0 769.9 L733.5 770.1 L733.0 770.3 L732.5 770.3 L732.0 769.8 L731.5 770.3 L731.0 770.0 L730.5 769.9 L730.0 769.9 L729.5 769.9 L729.0 769.7 L728.5 770.3 L728.0 769.8 L727.5 770.2 L727.0 769.7 L726.5 769.9 L726.0 770.0 L725.5 770.3 L725.0 770.0Z M925.0 768.4 L925.5 768.4 L926.0 767.9 L926.5 767.4 L927.0 767.8 L927.5 766.8 L928.0 767.1 L928.5 765.9 L929.0 765.3 L929.5 765.7 L930.0 765.4 L930.5 766.3 L931.0 766.3 L931.5 766.0 L932.0 765.0 L932.5 765.7 L933.0 764.9 L933.5 763.9 L934.0 765.7 L934.5 765.2 L935.0 765.0 L935.5 763.4 L936.0 764.7 L936.5 765.1 L937.0 765.6 L937.5 764.5 L938.0 764.4 L938.5 765.3 L939.0 764.8 L939.5 765.7 L940.0 765.1 L940.5 765.6 L941.0 766.6 L941.5 766.3 L942.0 765.6 L942.5 765.8 L943.0 766.8 L943.5 767.4 L944.0 767.8 L944.5 768.0 L945.0 768.3 L945.5 768.3 L946.0 768.4 L946.0 768.4 L946.5 768.4 L947.0 768.4 L947.5 768.2 L948.0 768.2 L948.5 768.1 L949.0 768.3 L949.5 767.9 L950.0 767.9 L950.5 767.7 L951.0 767.6 L951.5 767.6 L952.0 767.2 L952.5 767.5 L953.0 766.6 L953.5 767.2 L954.0 766.2 L954.5 766.9 L955.0 766.9 L955.5 767.3 L956.0 766.9 L956.5 766.8 L957.0 766.1 L957.5 766.1 L958.0 765.8 L958.5 765.6 L959.0 766.5 L959.5 766.7 L960.0 766.5 L960.5 766.2 L961.0 765.2 L961.5 765.8 L962.0 766.5 L962.5 766.6 L963.0 767.0 L963.5 766.0 L964.0 765.7 L964.5 766.0 L965.0 766.1 L965.5 766.8 L966.0 767.4 L966.5 766.6 L967.0 766.8 L967.5 767.1 L968.0 766.6 L968.5 766.7 L969.0 767.1 L969.5 767.2 L970.0 767.5 L970.5 767.8 L971.0 767.8 L971.5 767.7 L972.0 767.8 L972.5 768.2 L973.0 768.0 L973.5 768.4 L974.0 768.4 L974.5 768.4 L975.0 768.4 L975.0 768.4 L975.5 767.8 L976.0 767.6 L976.5 766.4 L977.0 766.6 L977.5 766.2 L978.0 764.1 L978.5 764.6 L979.0 764.6 L979.5 764.0 L980.0 764.0 L980.5 762.4 L981.0 762.0 L981.5 762.3 L982.0 762.8 L982.5 763.0 L983.0 764.0 L983.5 764.2 L984.0 761.4 L984.5 762.7 L985.0 760.9 L985.5 762.0 L986.0 764.1 L986.5 763.1 L987.0 764.3 L987.5 764.0 L988.0 763.4 L988.5 764.6 L989.0 764.3 L989.5 765.9 L990.0 765.8 L990.5 766.2 L991.0 767.4 L991.5 768.0 L992.0 768.4 L992.0 768.4 L992.5 768.4 L993.0 768.4 L993.5 767.9 L994.0 767.4 L994.5 767.5 L995.0 767.4 L995.5 767.4 L996.0 767.0 L996.5 767.0 L997.0 766.4 L997.5 766.2 L998.0 767.0 L998.5 767.2 L999.0 767.3 L999.5 766.6 L1000.0 767.3 L1000.5 766.5 L1001.0 767.4 L1001.5 767.2 L1002.0 766.9 L1002.5 767.4 L1003.0 767.9 L1003.5 768.2 L1004.0 768.3 L1004.5 768.4 L1005.0 768.4 L1005.0 768.4 L1005.5 768.4 L1006.0 768.4 L1006.5 768.1 L1007.0 768.2 L1007.5 767.8 L1008.0 767.7 L1008.5 767.5 L1009.0 767.3 L1009.5 767.0 L1010.0 767.6 L1010.5 766.8 L1011.0 766.6 L1011.5 766.9 L1012.0 766.9 L1012.5 766.4 L1013.0 766.6 L1013.5 766.4 L1014.0 766.7 L1014.5 765.7 L1015.0 765.3 L1015.5 765.8 L1016.0 765.5 L1016.5 765.5 L1017.0 765.3 L1017.5 765.8 L1018.0 764.6 L1018.5 764.5 L1019.0 766.3 L1019.5 765.2 L1020.0 765.7 L1020.5 765.7 L1021.0 764.6 L1021.5 765.9 L1022.0 766.0 L1022.5 765.6 L1023.0 765.4 L1023.5 765.2 L1024.0 764.1 L1024.5 764.1 L1025.0 764.2 L1025.5 765.3 L1026.0 765.5 L1026.5 766.2 L1027.0 766.3 L1027.5 764.8 L1028.0 764.8 L1028.5 764.5 L1029.0 764.6 L1029.5 764.9 L1030.0 766.4 L1030.5 765.5 L1031.0 765.0 L1031.5 765.8 L1032.0 765.6 L1032.5 766.7 L1033.0 766.6 L1033.5 766.2 L1034.0 766.0 L1034.5 766.3 L1035.0 766.7 L1035.5 766.4 L1036.0 767.0 L1036.5 767.3 L1037.0 767.6 L1037.5 767.5 L1038.0 767.3 L1038.5 767.4 L1039.0 767.6 L1039.5 768.1 L1040.0 768.3 L1040.5 768.4 L1041.0 768.4 L1041.5 768.4 L1042.0 768.4 L1042.0 769.6 L1041.5 769.5 L1041.0 769.5 L1040.5 769.6 L1040.0 769.7 L1039.5 769.8 L1039.0 770.3 L1038.5 770.6 L1038.0 770.3 L1037.5 770.1 L1037.0 770.3 L1036.5 770.6 L1036.0 770.8 L1035.5 771.0 L1035.0 771.4 L1034.5 771.8 L1034.0 771.3 L1033.5 771.3 L1033.0 771.4 L1032.5 770.8 L1032.0 772.1 L1031.5 772.3 L1031.0 772.1 L1030.5 772.1 L1030.0 771.2 L1029.5 772.7 L1029.0 773.6 L1028.5 772.5 L1028.0 772.3 L1027.5 772.7 L1027.0 771.4 L1026.5 771.6 L1026.0 772.3 L1025.5 771.8 L1025.0 774.0 L1024.5 772.9 L1024.0 773.1 L1023.5 772.0 L1023.0 772.1 L1022.5 771.8 L1022.0 772.0 L1021.5 772.0 L1021.0 772.5 L1020.5 772.4 L1020.0 772.1 L1019.5 772.9 L1019.0 771.1 L1018.5 772.7 L1018.0 772.5 L1017.5 771.6 L1017.0 772.5 L1016.5 772.2 L1016.0 772.2 L1015.5 771.5 L1015.0 771.9 L1014.5 771.6 L1014.0 771.0 L1013.5 771.7 L1013.0 771.4 L1012.5 771.4 L1012.0 771.0 L1011.5 771.0 L1011.0 771.0 L1010.5 770.9 L1010.0 770.2 L1009.5 770.8 L1009.0 770.3 L1008.5 770.3 L1008.0 770.2 L1007.5 770.1 L1007.0 769.6 L1006.5 769.7 L1006.0 769.6 L1005.5 769.5 L1005.0 769.5 L1005.0 769.6 L1004.5 769.5 L1004.0 769.6 L1003.5 769.8 L1003.0 770.0 L1002.5 770.3 L1002.0 771.1 L1001.5 770.7 L1001.0 770.5 L1000.5 771.2 L1000.0 770.6 L999.5 771.2 L999.0 770.3 L998.5 770.8 L998.0 770.6 L997.5 771.8 L997.0 771.4 L996.5 770.5 L996.0 770.9 L995.5 770.6 L995.0 770.4 L994.5 770.5 L994.0 770.4 L993.5 769.9 L993.0 769.6 L992.5 769.6 L992.0 769.5 L992.0 769.5 L991.5 769.7 L991.0 770.5 L990.5 771.7 L990.0 771.6 L989.5 771.9 L989.0 773.1 L988.5 773.2 L988.0 773.7 L987.5 773.3 L987.0 772.6 L986.5 774.5 L986.0 773.3 L985.5 776.0 L985.0 775.3 L984.5 774.2 L984.0 775.3 L983.5 772.8 L983.0 773.6 L982.5 773.6 L982.0 774.3 L981.5 774.5 L981.0 775.0 L980.5 774.2 L980.0 773.9 L979.5 773.5 L979.0 773.6 L978.5 772.4 L978.0 773.4 L977.5 771.4 L977.0 771.0 L976.5 771.0 L976.0 770.4 L975.5 769.9 L975.0 769.6 L975.0 769.6 L974.5 769.6 L974.0 769.5 L973.5 769.5 L973.0 769.9 L972.5 769.7 L972.0 770.1 L971.5 770.3 L971.0 770.3 L970.5 770.1 L970.0 770.4 L969.5 770.5 L969.0 770.8 L968.5 771.0 L968.0 771.1 L967.5 770.7 L967.0 771.3 L966.5 771.1 L966.0 770.6 L965.5 771.3 L965.0 771.6 L964.5 771.5 L964.0 771.5 L963.5 772.0 L963.0 770.5 L962.5 771.0 L962.0 771.3 L961.5 772.3 L961.0 771.9 L960.5 771.2 L960.0 771.2 L959.5 771.4 L959.0 771.1 L958.5 772.3 L958.0 772.3 L957.5 771.6 L957.0 771.8 L956.5 770.7 L956.0 770.9 L955.5 770.6 L955.0 770.6 L954.5 770.7 L954.0 771.7 L953.5 770.9 L953.0 771.0 L952.5 770.4 L952.0 770.4 L951.5 770.4 L951.0 770.4 L950.5 770.1 L950.0 770.0 L949.5 770.1 L949.0 769.8 L948.5 769.7 L948.0 769.7 L947.5 769.6 L947.0 769.6 L946.5 769.5 L946.0 769.6 L946.0 769.6 L945.5 769.5 L945.0 769.6 L944.5 769.9 L944.0 770.2 L943.5 770.7 L943.0 770.6 L942.5 772.4 L942.0 771.8 L941.5 771.6 L941.0 771.4 L940.5 772.4 L940.0 772.4 L939.5 772.1 L939.0 773.2 L938.5 772.2 L938.0 773.6 L937.5 772.8 L937.0 772.4 L936.5 772.6 L936.0 773.5 L935.5 774.3 L935.0 772.2 L934.5 772.3 L934.0 771.7 L933.5 773.8 L933.0 773.2 L932.5 772.0 L932.0 773.0 L931.5 771.8 L931.0 771.6 L930.5 771.8 L930.0 772.2 L929.5 771.8 L929.0 772.4 L928.5 771.6 L928.0 770.4 L927.5 771.2 L927.0 770.0 L926.5 770.4 L926.0 769.8 L925.5 769.5 L925.0 769.5Z M1045.0 768.4 L1045.5 768.4 L1046.0 768.4 L1046.5 768.0 L1047.0 768.0 L1047.5 768.1 L1048.0 768.0 L1048.5 767.7 L1049.0 767.7 L1049.5 767.5 L1050.0 767.2 L1050.5 766.8 L1051.0 767.3 L1051.5 766.8 L1052.0 766.8 L1052.5 766.9 L1053.0 766.7 L1053.5 766.8 L1054.0 765.9 L1054.5 765.3 L1055.0 765.9 L1055.5 766.0 L1056.0 765.4 L1056.5 766.0 L1057.0 764.3 L1057.5 765.0 L1058.0 764.6 L1058.5 764.9 L1059.0 764.9 L1059.5 764.4 L1060.0 765.1 L1060.5 765.3 L1061.0 764.3 L1061.5 765.2 L1062.0 765.7 L1062.5 765.6 L1063.0 763.8 L1063.5 764.6 L1064.0 763.7 L1064.5 763.8 L1065.0 765.3 L1065.5 764.1 L1066.0 766.0 L1066.5 765.1 L1067.0 763.4 L1067.5 763.8 L1068.0 763.7 L1068.5 763.8 L1069.0 764.4 L1069.5 765.2 L1070.0 764.4 L1070.5 764.0 L1071.0 763.7 L1071.5 763.9 L1072.0 764.1 L1072.5 766.0 L1073.0 766.2 L1073.5 765.6 L1074.0 765.4 L1074.5 765.0 L1075.0 765.7 L1075.5 765.2 L1076.0 765.4 L1076.5 766.5 L1077.0 765.9 L1077.5 766.3 L1078.0 765.6 L1078.5 767.0 L1079.0 767.2 L1079.5 766.4 L1080.0 766.9 L1080.5 767.2 L1081.0 767.2 L1081.5 767.0 L1082.0 767.7 L1082.5 767.3 L1083.0 767.7 L1083.5 768.2 L1084.0 768.3 L1084.5 768.3 L1085.0 768.3 L1085.5 768.4 L1086.0 768.4 L1086.0 768.2 L1086.5 768.0 L1087.0 768.0 L1087.5 768.0 L1088.0 768.1 L1088.5 768.2 L1089.0 768.1 L1089.5 768.3 L1090.0 768.4 L1090.5 768.0 L1091.0 768.2 L1091.5 767.9 L1092.0 768.3 L1092.0 769.7 L1091.5 770.1 L1091.0 769.8 L1090.5 769.9 L1090.0 769.6 L1089.5 769.6 L1089.0 769.9 L1088.5 769.8 L1088.0 769.7 L1087.5 769.8 L1087.0 769.8 L1086.5 769.9 L1086.0 769.7 L1086.0 769.6 L1085.5 769.6 L1085.0 769.6 L1084.5 769.6 L1084.0 769.7 L1083.5 769.8 L1083.0 770.3 L1082.5 770.5 L1082.0 770.1 L1081.5 770.7 L1081.0 770.9 L1080.5 770.5 L1080.0 770.8 L1079.5 771.2 L1079.0 770.4 L1078.5 770.8 L1078.0 772.4 L1077.5 771.5 L1077.0 772.1 L1076.5 771.0 L1076.0 772.6 L1075.5 772.6 L1075.0 772.3 L1074.5 772.9 L1074.0 772.7 L1073.5 771.8 L1073.0 771.2 L1072.5 772.0 L1072.0 773.8 L1071.5 773.0 L1071.0 773.8 L1070.5 773.2 L1070.0 773.6 L1069.5 772.3 L1069.0 773.6 L1068.5 774.1 L1068.0 774.5 L1067.5 773.1 L1067.0 774.3 L1066.5 772.1 L1066.0 771.9 L1065.5 773.8 L1065.0 772.5 L1064.5 773.9 L1064.0 774.4 L1063.5 772.9 L1063.0 774.1 L1062.5 772.5 L1062.0 771.7 L1061.5 772.0 L1061.0 772.8 L1060.5 772.6 L1060.0 772.0 L1059.5 773.0 L1059.0 772.1 L1058.5 772.7 L1058.0 772.7 L1057.5 772.9 L1057.0 772.6 L1056.5 771.8 L1056.0 771.7 L1055.5 771.9 L1055.0 771.5 L1054.5 771.9 L1054.0 771.6 L1053.5 770.9 L1053.0 770.9 L1052.5 771.1 L1052.0 771.1 L1051.5 771.2 L1051.0 770.7 L1050.5 771.2 L1050.0 770.8 L1049.5 770.2 L1049.0 770.1 L1048.5 770.1 L1048.0 769.9 L1047.5 769.8 L1047.0 769.9 L1046.5 769.8 L1046.0 769.5 L1045.5 769.5 L1045.0 769.6Z M1130.0 767.9 L1130.5 767.9 L1131.0 767.8 L1131.5 767.9 L1132.0 767.8 L1132.5 768.0 L1133.0 768.2 L1133.5 767.7 L1134.0 767.9 L1134.5 767.6 L1135.0 767.8 L1135.5 768.1 L1136.0 767.7 L1136.5 768.1 L1137.0 767.8 L1137.5 767.9 L1138.0 767.8 L1138.5 767.8 L1139.0 768.0 L1139.5 767.7 L1140.0 767.7 L1140.5 767.9 L1141.0 767.7 L1141.5 768.0 L1142.0 767.9 L1142.5 767.9 L1143.0 768.2 L1143.5 767.7 L1144.0 767.7 L1144.5 768.0 L1145.0 768.0 L1145.0 768.4 L1145.5 768.4 L1146.0 768.3 L1146.5 768.3 L1147.0 768.3 L1147.5 767.9 L1148.0 767.2 L1148.5 767.6 L1149.0 767.3 L1149.5 767.1 L1150.0 767.4 L1150.5 766.9 L1151.0 766.8 L1151.5 766.3 L1152.0 766.7 L1152.5 766.4 L1153.0 766.3 L1153.5 766.3 L1154.0 766.2 L1154.5 766.6 L1155.0 766.5 L1155.5 766.8 L1156.0 765.7 L1156.5 766.5 L1157.0 767.1 L1157.5 766.5 L1158.0 766.3 L1158.5 766.1 L1159.0 765.9 L1159.5 766.8 L1160.0 766.5 L1160.5 767.5 L1161.0 767.2 L1161.5 767.1 L1162.0 767.6 L1162.5 767.8 L1163.0 767.6 L1163.5 767.7 L1164.0 768.1 L1164.5 768.4 L1165.0 768.3 L1165.5 768.4 L1166.0 768.4 L1166.0 768.4 L1166.5 767.8 L1167.0 767.0 L1167.5 767.1 L1168.0 765.8 L1168.5 766.3 L1169.0 765.4 L1169.5 765.4 L1170.0 764.9 L1170.5 763.2 L1171.0 762.5 L1171.5 762.8 L1172.0 762.6 L1172.5 765.1 L1173.0 764.2 L1173.5 764.0 L1174.0 762.0 L1174.5 764.0 L1175.0 764.1 L1175.5 763.1 L1176.0 764.3 L1176.5 764.4 L1177.0 764.4 L1177.5 762.8 L1178.0 765.4 L1178.5 765.9 L1179.0 765.6 L1179.5 765.8 L1180.0 766.1 L1180.5 766.6 L1181.0 767.5 L1181.5 767.7 L1182.0 768.4 L1182.0 767.7 L1182.5 768.1 L1183.0 768.0 L1183.5 767.7 L1184.0 767.9 L1184.5 767.9 L1185.0 768.1 L1185.5 768.0 L1186.0 768.2 L1186.5 768.1 L1187.0 767.8 L1187.5 767.5 L1188.0 767.6 L1188.5 767.7 L1189.0 768.2 L1189.5 768.3 L1190.0 767.8 L1190.5 768.0 L1191.0 768.0 L1191.5 767.5 L1192.0 768.2 L1192.5 768.0 L1193.0 767.9 L1193.5 768.2 L1194.0 768.1 L1194.5 767.9 L1195.0 767.6 L1195.5 767.9 L1196.0 768.2 L1196.5 768.0 L1197.0 768.1 L1197.5 768.2 L1198.0 767.7 L1198.5 767.5 L1199.0 767.7 L1199.5 767.8 L1200.0 768.2 L1200.0 768.4 L1200.5 768.3 L1201.0 767.6 L1201.5 767.3 L1202.0 766.3 L1202.5 766.9 L1203.0 765.7 L1203.5 765.8 L1204.0 766.3 L1204.5 765.0 L1205.0 766.0 L1205.5 765.6 L1206.0 764.5 L1206.5 763.9 L1207.0 764.6 L1207.5 764.2 L1208.0 765.0 L1208.5 764.3 L1209.0 765.2 L1209.5 764.1 L1210.0 765.6 L1210.5 765.0 L1211.0 766.2 L1211.5 766.6 L1212.0 765.7 L1212.5 766.2 L1213.0 767.3 L1213.5 766.7 L1214.0 768.0 L1214.5 768.4 L1215.0 768.4 L1215.0 768.4 L1215.5 768.4 L1216.0 768.4 L1216.5 768.2 L1217.0 767.9 L1217.5 768.1 L1218.0 768.1 L1218.5 768.0 L1219.0 767.5 L1219.5 768.0 L1220.0 767.3 L1220.5 767.2 L1221.0 766.9 L1221.5 767.4 L1222.0 766.9 L1222.5 767.2 L1223.0 766.6 L1223.5 766.2 L1224.0 766.5 L1224.5 766.1 L1225.0 766.4 L1225.5 765.7 L1226.0 766.8 L1226.5 766.1 L1227.0 765.6 L1227.5 766.1 L1228.0 765.4 L1228.5 765.7 L1229.0 765.6 L1229.5 766.9 L1230.0 765.7 L1230.5 765.7 L1231.0 765.8 L1231.5 765.2 L1232.0 765.2 L1232.5 765.1 L1233.0 765.8 L1233.5 765.6 L1234.0 765.8 L1234.5 766.2 L1235.0 765.7 L1235.5 766.2 L1236.0 766.3 L1236.5 766.9 L1237.0 765.5 L1237.5 765.3 L1238.0 765.4 L1238.5 765.6 L1239.0 766.6 L1239.5 767.1 L1240.0 766.3 L1240.5 766.9 L1241.0 766.2 L1241.5 766.1 L1242.0 767.1 L1242.5 767.0 L1243.0 767.2 L1243.5 766.8 L1244.0 767.2 L1244.5 767.2 L1245.0 767.4 L1245.5 767.2 L1246.0 767.9 L1246.5 767.9 L1247.0 768.3 L1247.5 768.0 L1248.0 768.3 L1248.5 768.2 L1249.0 768.4 L1249.5 768.4 L1250.0 768.4 L1250.0 769.6 L1249.5 769.5 L1249.0 769.6 L1248.5 769.7 L1248.0 769.6 L1247.5 770.1 L1247.0 769.6 L1246.5 770.1 L1246.0 769.9 L1245.5 770.8 L1245.0 770.7 L1244.5 770.9 L1244.0 770.7 L1243.5 770.7 L1243.0 770.7 L1242.5 770.9 L1242.0 770.9 L1241.5 771.6 L1241.0 771.9 L1240.5 771.1 L1240.0 771.8 L1239.5 770.6 L1239.0 771.1 L1238.5 771.8 L1238.0 772.8 L1237.5 772.6 L1237.0 772.3 L1236.5 770.8 L1236.0 771.3 L1235.5 771.3 L1235.0 772.1 L1234.5 771.9 L1234.0 772.2 L1233.5 772.4 L1233.0 771.4 L1232.5 772.9 L1232.0 772.8 L1231.5 772.8 L1231.0 772.0 L1230.5 771.9 L1230.0 772.0 L1229.5 770.7 L1229.0 771.6 L1228.5 772.5 L1228.0 771.9 L1227.5 771.4 L1227.0 771.7 L1226.5 772.0 L1226.0 770.7 L1225.5 772.0 L1225.0 771.0 L1224.5 771.4 L1224.0 771.0 L1223.5 771.8 L1223.0 770.8 L1222.5 770.4 L1222.0 770.7 L1221.5 770.2 L1221.0 771.1 L1220.5 770.7 L1220.0 770.7 L1219.5 770.0 L1219.0 770.5 L1218.5 769.9 L1218.0 769.9 L1217.5 769.9 L1217.0 770.0 L1216.5 769.6 L1216.0 769.5 L1215.5 769.5 L1215.0 769.6 L1215.0 769.6 L1214.5 769.6 L1214.0 769.7 L1213.5 771.3 L1213.0 770.3 L1212.5 771.8 L1212.0 772.2 L1211.5 771.1 L1211.0 771.9 L1210.5 772.0 L1210.0 772.4 L1209.5 773.4 L1209.0 772.6 L1208.5 773.6 L1208.0 772.5 L1207.5 772.7 L1207.0 772.4 L1206.5 773.9 L1206.0 773.2 L1205.5 771.8 L1205.0 771.8 L1204.5 772.5 L1204.0 771.2 L1203.5 772.0 L1203.0 772.3 L1202.5 770.8 L1202.0 771.5 L1201.5 770.3 L1201.0 770.3 L1200.5 769.5 L1200.0 769.6 L1200.0 769.6 L1199.5 770.2 L1199.0 770.1 L1198.5 770.3 L1198.0 770.3 L1197.5 769.9 L1197.0 769.7 L1196.5 769.9 L1196.0 769.6 L1195.5 770.1 L1195.0 770.4 L1194.5 770.2 L1194.0 769.9 L1193.5 769.6 L1193.0 770.0 L1192.5 770.0 L1192.0 769.7 L1191.5 770.2 L1191.0 769.9 L1190.5 769.8 L1190.0 770.1 L1189.5 769.7 L1189.0 769.6 L1188.5 770.2 L1188.0 770.5 L1187.5 770.4 L1187.0 770.1 L1186.5 769.7 L1186.0 769.8 L1185.5 769.9 L1185.0 769.9 L1184.5 769.9 L1184.0 769.9 L1183.5 770.1 L1183.0 770.0 L1182.5 769.7 L1182.0 770.0 L1182.0 769.5 L1181.5 770.3 L1181.0 770.6 L1180.5 771.2 L1180.0 771.6 L1179.5 772.1 L1179.0 771.6 L1178.5 771.8 L1178.0 772.6 L1177.5 774.6 L1177.0 773.6 L1176.5 773.5 L1176.0 773.3 L1175.5 774.1 L1175.0 773.0 L1174.5 774.0 L1174.0 775.9 L1173.5 773.4 L1173.0 773.0 L1172.5 772.7 L1172.0 774.4 L1171.5 773.8 L1171.0 774.6 L1170.5 775.0 L1170.0 772.2 L1169.5 771.9 L1169.0 772.6 L1168.5 771.1 L1168.0 772.0 L1167.5 770.9 L1167.0 771.0 L1166.5 770.2 L1166.0 769.6 L1166.0 769.5 L1165.5 769.6 L1165.0 769.7 L1164.5 769.6 L1164.0 769.8 L1163.5 770.2 L1163.0 770.4 L1162.5 770.1 L1162.0 770.2 L1161.5 771.0 L1161.0 770.6 L1160.5 770.6 L1160.0 771.1 L1159.5 770.9 L1159.0 772.0 L1158.5 771.5 L1158.0 771.6 L1157.5 771.6 L1157.0 770.6 L1156.5 771.5 L1156.0 772.1 L1155.5 771.0 L1155.0 771.0 L1154.5 771.5 L1154.0 771.6 L1153.5 771.1 L1153.0 771.2 L1152.5 771.2 L1152.0 771.4 L1151.5 771.2 L1151.0 771.1 L1150.5 770.9 L1150.0 770.3 L1149.5 770.9 L1149.0 770.7 L1148.5 770.4 L1148.0 770.5 L1147.5 770.0 L1147.0 769.6 L1146.5 769.6 L1146.0 769.6 L1145.5 769.5 L1145.0 769.6 L1145.0 769.9 L1144.5 769.8 L1144.0 770.1 L1143.5 770.1 L1143.0 769.8 L1142.5 769.9 L1142.0 770.1 L1141.5 769.8 L1141.0 770.2 L1140.5 770.1 L1140.0 770.2 L1139.5 770.2 L1139.0 769.9 L1138.5 770.0 L1138.0 770.0 L1137.5 770.1 L1137.0 769.9 L1136.5 769.8 L1136.0 770.3 L1135.5 769.7 L1135.0 769.9 L1134.5 770.3 L1134.0 770.1 L1133.5 770.2 L1133.0 769.8 L1132.5 770.0 L1132.0 770.1 L1131.5 770.0 L1131.0 770.0 L1130.5 770.0 L1130.0 770.2Z M1285.0 768.1 L1285.5 767.6 L1286.0 767.8 L1286.5 767.8 L1287.0 768.0 L1287.5 768.2 L1288.0 768.1 L1288.5 768.2 L1289.0 767.6 L1289.5 768.0 L1290.0 768.0 L1290.0 768.4 L1290.5 768.4 L1291.0 768.4 L1291.5 768.1 L1292.0 767.9 L1292.5 767.8 L1293.0 767.7 L1293.5 767.6 L1294.0 767.9 L1294.5 766.9 L1295.0 767.0 L1295.5 766.9 L1296.0 767.5 L1296.5 766.6 L1297.0 766.6 L1297.5 766.9 L1298.0 767.1 L1298.5 766.8 L1299.0 766.5 L1299.5 766.9 L1300.0 766.8 L1300.5 766.1 L1301.0 766.3 L1301.5 766.1 L1302.0 765.1 L1302.5 766.3 L1303.0 766.1 L1303.5 765.7 L1304.0 764.9 L1304.5 765.0 L1305.0 765.7 L1305.5 765.3 L1306.0 765.4 L1306.5 766.3 L1307.0 765.6 L1307.5 765.8 L1308.0 765.8 L1308.5 765.2 L1309.0 763.9 L1309.5 766.0 L1310.0 764.9 L1310.5 764.8 L1311.0 764.4 L1311.5 764.0 L1312.0 765.5 L1312.5 764.2 L1313.0 766.1 L1313.5 764.7 L1314.0 765.3 L1314.5 765.5 L1315.0 765.9 L1315.5 765.5 L1316.0 764.4 L1316.5 766.2 L1317.0 765.7 L1317.5 766.8 L1318.0 765.4 L1318.5 766.2 L1319.0 765.6 L1319.5 766.5 L1320.0 765.4 L1320.5 766.0 L1321.0 766.1 L1321.5 766.8 L1322.0 765.9 L1322.5 766.9 L1323.0 766.7 L1323.5 767.2 L1324.0 767.1 L1324.5 767.4 L1325.0 767.7 L1325.5 767.5 L1326.0 767.4 L1326.5 767.6 L1327.0 767.7 L1327.5 767.9 L1328.0 768.0 L1328.5 768.4 L1329.0 768.4 L1329.5 768.4 L1330.0 768.4 L1330.0 768.4 L1330.5 768.4 L1331.0 768.3 L1331.5 767.9 L1332.0 768.1 L1332.5 767.9 L1333.0 767.6 L1333.5 767.0 L1334.0 766.3 L1334.5 767.0 L1335.0 766.6 L1335.5 766.9 L1336.0 766.4 L1336.5 765.6 L1337.0 765.4 L1337.5 766.7 L1338.0 766.7 L1338.5 766.5 L1339.0 765.9 L1339.5 766.6 L1340.0 765.9 L1340.5 766.2 L1341.0 767.0 L1341.5 766.5 L1342.0 766.6 L1342.5 766.9 L1343.0 767.8 L1343.5 767.4 L1344.0 767.5 L1344.5 768.1 L1345.0 768.2 L1345.5 768.4 L1346.0 768.4 L1346.0 768.4 L1346.5 767.9 L1347.0 765.9 L1347.5 764.8 L1348.0 763.1 L1348.5 764.6 L1349.0 762.3 L1349.5 763.7 L1350.0 761.0 L1350.5 760.8 L1351.0 760.7 L1351.5 763.1 L1352.0 763.3 L1352.5 764.7 L1353.0 764.1 L1353.5 765.1 L1354.0 763.2 L1354.5 765.4 L1355.0 766.2 L1355.5 767.4 L1356.0 768.4 L1356.0 769.5 L1355.5 770.2 L1355.0 771.2 L1354.5 772.5 L1354.0 774.3 L1353.5 772.6 L1353.0 773.3 L1352.5 772.4 L1352.0 773.7 L1351.5 773.8 L1351.0 777.1 L1350.5 776.0 L1350.0 775.5 L1349.5 774.5 L1349.0 774.4 L1348.5 772.9 L1348.0 774.8 L1347.5 772.4 L1347.0 772.0 L1346.5 770.0 L1346.0 769.6 L1346.0 769.5 L1345.5 769.6 L1345.0 769.8 L1344.5 769.8 L1344.0 770.2 L1343.5 770.3 L1343.0 770.2 L1342.5 770.7 L1342.0 771.4 L1341.5 771.3 L1341.0 770.6 L1340.5 771.6 L1340.0 772.1 L1339.5 771.2 L1339.0 772.2 L1338.5 771.1 L1338.0 770.8 L1337.5 771.3 L1337.0 772.2 L1336.5 771.8 L1336.0 771.6 L1335.5 771.2 L1335.0 771.2 L1334.5 770.6 L1334.0 771.0 L1333.5 770.9 L1333.0 770.1 L1332.5 770.1 L1332.0 769.8 L1331.5 770.0 L1331.0 769.6 L1330.5 769.6 L1330.0 769.6 L1330.0 769.5 L1329.5 769.6 L1329.0 769.5 L1328.5 769.6 L1328.0 769.9 L1327.5 769.9 L1327.0 770.0 L1326.5 770.5 L1326.0 770.7 L1325.5 770.3 L1325.0 770.3 L1324.5 770.6 L1324.0 771.0 L1323.5 770.7 L1323.0 770.8 L1322.5 770.6 L1322.0 771.4 L1321.5 771.0 L1321.0 771.4 L1320.5 771.6 L1320.0 772.5 L1319.5 771.5 L1319.0 772.2 L1318.5 771.5 L1318.0 772.2 L1317.5 770.9 L1317.0 772.0 L1316.5 771.1 L1316.0 773.1 L1315.5 771.7 L1315.0 772.0 L1314.5 772.0 L1314.0 771.9 L1313.5 772.8 L1313.0 771.4 L1312.5 772.9 L1312.0 771.8 L1311.5 773.6 L1311.0 772.6 L1310.5 773.4 L1310.0 772.8 L1309.5 771.5 L1309.0 773.7 L1308.5 772.4 L1308.0 771.5 L1307.5 771.8 L1307.0 771.7 L1306.5 771.1 L1306.0 772.5 L1305.5 771.9 L1305.0 771.5 L1304.5 773.0 L1304.0 772.1 L1303.5 771.9 L1303.0 771.5 L1302.5 771.2 L1302.0 772.2 L1301.5 771.5 L1301.0 771.7 L1300.5 771.3 L1300.0 770.9 L1299.5 771.0 L1299.0 771.4 L1298.5 771.3 L1298.0 771.0 L1297.5 770.6 L1297.0 771.2 L1296.5 771.1 L1296.0 770.2 L1295.5 770.7 L1295.0 770.9 L1294.5 770.7 L1294.0 769.9 L1293.5 770.2 L1293.0 770.3 L1292.5 769.9 L1292.0 769.8 L1291.5 769.8 L1291.0 769.5 L1290.5 769.5 L1290.0 769.5 L1290.0 769.7 L1289.5 770.0 L1289.0 770.4 L1288.5 769.7 L1288.0 769.7 L1287.5 769.6 L1287.0 769.8 L1286.5 770.2 L1286.0 770.2 L1285.5 770.3 L1285.0 769.7Z" fill="#ef90ca"/>
<path d="M1122.0 768.4 L1122.5 767.3 L1123.0 766.4 L1123.5 765.8 L1124.0 765.8 L1124.5 764.7 L1125.0 762.5 L1125.5 761.9 L1126.0 762.7 L1126.5 764.8 L1127.0 763.3 L1127.5 764.9 L1128.0 764.6 L1128.5 765.4 L1129.0 765.2 L1129.5 764.7 L1130.0 767.1 L1130.5 767.4 L1131.0 768.4 L1131.0 769.5 L1130.5 770.3 L1130.0 770.9 L1129.5 772.3 L1129.0 772.6 L1128.5 772.0 L1128.0 773.2 L1127.5 772.1 L1127.0 773.8 L1126.5 772.8 L1126.0 774.1 L1125.5 776.2 L1125.0 775.0 L1124.5 772.5 L1124.0 772.2 L1123.5 772.3 L1123.0 771.4 L1122.5 770.7 L1122.0 769.6Z M1250.0 768.4 L1250.5 768.3 L1251.0 768.0 L1251.5 767.4 L1252.0 766.5 L1252.5 766.7 L1253.0 765.8 L1253.5 766.2 L1254.0 764.8 L1254.5 766.0 L1255.0 764.2 L1255.5 763.9 L1256.0 763.6 L1256.5 765.5 L1257.0 765.5 L1257.5 763.6 L1258.0 764.7 L1258.5 763.4 L1259.0 764.9 L1259.5 764.0 L1260.0 764.4 L1260.5 765.8 L1261.0 765.0 L1261.5 766.1 L1262.0 765.8 L1262.5 765.2 L1263.0 765.8 L1263.5 766.9 L1264.0 766.9 L1264.5 767.6 L1265.0 767.5 L1265.5 768.1 L1266.0 768.4 L1266.0 768.4 L1266.5 768.3 L1267.0 767.9 L1267.5 767.0 L1268.0 765.6 L1268.5 765.7 L1269.0 766.0 L1269.5 764.8 L1270.0 764.3 L1270.5 764.2 L1271.0 765.5 L1271.5 763.9 L1272.0 762.9 L1272.5 763.8 L1273.0 762.6 L1273.5 764.1 L1274.0 763.2 L1274.5 764.0 L1275.0 764.2 L1275.5 764.7 L1276.0 763.2 L1276.5 765.7 L1277.0 765.3 L1277.5 766.8 L1278.0 766.1 L1278.5 767.3 L1279.0 767.7 L1279.5 768.2 L1280.0 768.4 L1280.0 767.8 L1280.5 767.6 L1281.0 766.9 L1281.5 767.6 L1282.0 767.4 L1282.5 767.7 L1283.0 767.2 L1283.5 767.6 L1284.0 767.0 L1284.5 767.3 L1285.0 767.2 L1285.5 767.3 L1286.0 767.2 L1286.0 770.4 L1285.5 770.6 L1285.0 770.5 L1284.5 770.8 L1284.0 771.1 L1283.5 770.3 L1283.0 770.4 L1282.5 770.0 L1282.0 770.4 L1281.5 770.4 L1281.0 770.6 L1280.5 770.2 L1280.0 769.9 L1280.0 769.5 L1279.5 769.6 L1279.0 770.4 L1278.5 770.5 L1278.0 771.5 L1277.5 771.1 L1277.0 772.1 L1276.5 771.9 L1276.0 774.9 L1275.5 772.3 L1275.0 773.5 L1274.5 772.9 L1274.0 775.0 L1273.5 773.4 L1273.0 775.2 L1272.5 773.6 L1272.0 774.0 L1271.5 773.2 L1271.0 772.0 L1270.5 772.7 L1270.0 773.3 L1269.5 772.6 L1269.0 771.7 L1268.5 771.7 L1268.0 772.4 L1267.5 770.6 L1267.0 769.9 L1266.5 769.7 L1266.0 769.6 L1266.0 769.5 L1265.5 769.9 L1265.0 770.5 L1264.5 770.1 L1264.0 770.7 L1263.5 770.8 L1263.0 772.3 L1262.5 772.6 L1262.0 771.7 L1261.5 771.8 L1261.0 772.8 L1260.5 771.8 L1260.0 772.8 L1259.5 772.9 L1259.0 772.3 L1258.5 774.2 L1258.0 772.3 L1257.5 774.3 L1257.0 772.3 L1256.5 772.2 L1256.0 774.3 L1255.5 773.2 L1255.0 773.2 L1254.5 771.4 L1254.0 772.8 L1253.5 771.3 L1253.0 771.7 L1252.5 771.3 L1252.0 771.4 L1251.5 770.2 L1251.0 769.8 L1250.5 769.6 L1250.0 769.5Z" fill="#7a7a7a"/>
</svg>
<div class="a" style="left:70.5px;top:807.4px;width:19.2px;height:9.2px;border-radius:4.6px;background:#c6c6c6"></div>
<svg style="left:0;top:0" width="1420" height="832">
<path d="M78.5 673 V826" stroke="#5a76da" stroke-width="1.1"/>
<path d="M73.1 663.1 H84.1 V668.4 L78.6 673.4 L73.1 668.4 Z" fill="#f2f2f4" stroke="#2456e4" stroke-width="1.8" stroke-linejoin="round"/>
<path d="M78.6 663.5 V672" stroke="#9a9aa8" stroke-width="1"/>
</svg></div>
</body></html>
